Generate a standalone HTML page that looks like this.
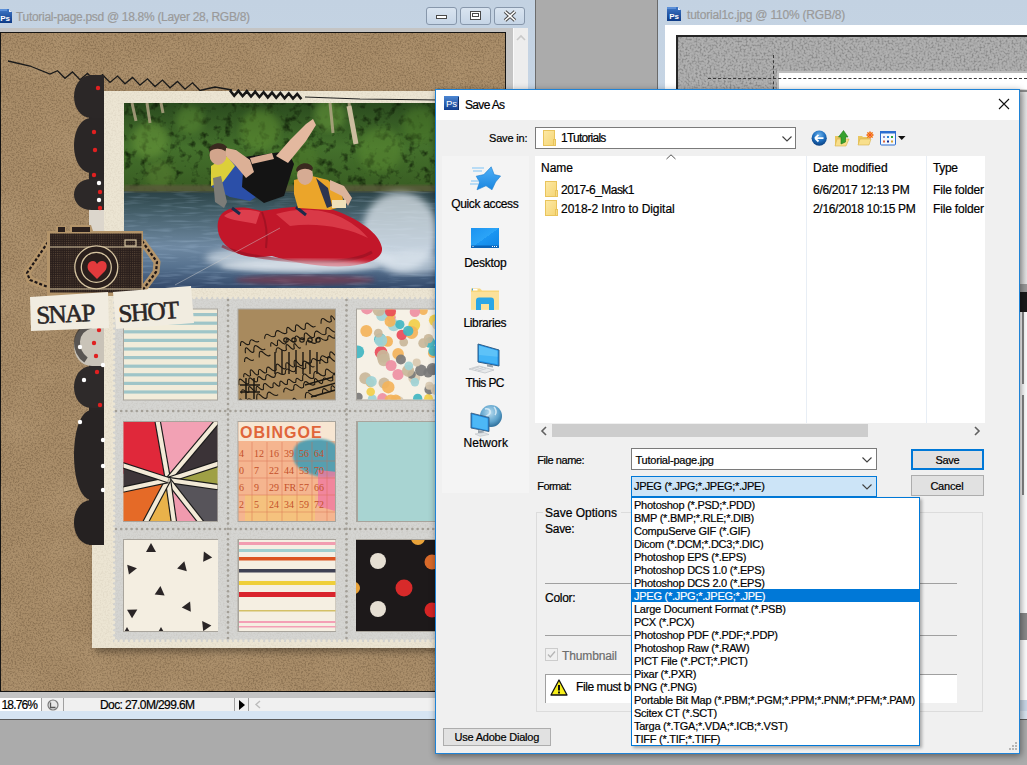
<!DOCTYPE html>
<html><head><meta charset="utf-8">
<style>
*{margin:0;padding:0;box-sizing:border-box}
html,body{width:1027px;height:765px;overflow:hidden;background:#ababab;font-family:"Liberation Sans",sans-serif;position:relative}
.a{position:absolute}
svg{position:absolute;overflow:visible}
.t{position:absolute;white-space:nowrap;font-family:"Liberation Sans",sans-serif;line-height:1;-webkit-text-stroke:0.2px currentColor}
.ttl{background:linear-gradient(#c3d2e2,#dae5f1)}
</style></head><body>

<div class="a ttl" style="left:0;top:0;width:535px;height:719px"></div>
<div class="a" style="left:0;top:28px;width:513px;height:670px;background:#c4c4c4"></div>
<div class="a" style="left:513px;top:28px;width:15px;height:670px;background:#ededed;border-left:1px solid #fafafa"></div>
<svg style="left:516px;top:34px" width="10" height="7"><path d="M1 6L5 2L9 6" fill="none" stroke="#c9c9c9" stroke-width="1.6"/></svg>
<div class="a" style="left:0;top:698px;width:528px;height:13px;background:#f0f0f0"></div>
<div class="a" style="left:0;top:698px;width:41px;height:13px;background:#fff"></div>
<div class="a" style="left:41px;top:698px;width:1px;height:13px;background:#a0a0a0"></div>
<svg style="left:46px;top:699px" width="14" height="12"><circle cx="7" cy="6" r="5" fill="#e6e6e6" stroke="#7a7a7a" stroke-width="1.2"/><path d="M4.5 3.5v5h5" fill="none" stroke="#555" stroke-width="1.3"/></svg>
<div class="a" style="left:63px;top:698px;width:1px;height:13px;background:#a0a0a0"></div>
<div class="a" style="left:234px;top:698px;width:1px;height:13px;background:#a0a0a0"></div>
<svg style="left:238px;top:700px" width="8" height="10"><path d="M1 0L7 5L1 10z" fill="#000"/></svg>
<div class="a" style="left:248px;top:698px;width:1px;height:13px;background:#a0a0a0"></div>
<svg style="left:254px;top:700px" width="8" height="9"><path d="M6 1L2 4.5L6 8" fill="none" stroke="#bcbcbc" stroke-width="1.4"/></svg>
<div class="a" style="left:0;top:711px;width:535px;height:8px;background:#d6e4f2"></div>
<div class="a" style="left:0;top:719px;width:535px;height:1px;background:#5a5a5a"></div>
<div class="a" style="left:535px;top:0;width:1px;height:720px;background:#6c6c6c"></div>

<svg style="left:-2px;top:7px" width="16" height="16" viewBox="0 0 16 16">
<defs><linearGradient id="psg-2" x1="0" y1="0" x2="0" y2="1"><stop offset="0" stop-color="#3f78c8"/><stop offset="1" stop-color="#0d3a86"/></linearGradient></defs>
<path d="M0 2h11l3 3v11H0z" fill="url(#psg-2)"/><path d="M11 2l3 3h-3z" fill="#e8eef8"/><rect x="0" y="2" width="9" height="2" fill="#5b8fd8"/>
<text x="2.2" y="13.5" font-family="Liberation Sans" font-size="8" fill="#fff" font-weight="bold">Ps</text></svg>
<div class="t" style="left:16.0px;top:10.84px;font-size:12px;color:#9a9a9a;letter-spacing:-0.298px;">Tutorial-page.psd @ 18.8% (Layer 28, RGB/8)</div>
<div class="t" style="left:1.5px;top:698.84px;font-size:12px;color:#000;letter-spacing:-0.841px;">18.76%</div>
<div class="t" style="left:100.0px;top:698.84px;font-size:12px;color:#000;letter-spacing:-0.607px;">Doc: 27.0M/299.6M</div>
<div class="a" style="left:426px;top:7px;width:31px;height:18px;border:1px solid #8797ab;border-radius:3px;background:linear-gradient(#d9e4f0,#c6d5e6)"></div><div class="a" style="left:436px;top:15px;width:11px;height:4px;border:1px solid #4a4a4a;background:#fff"></div>
<div class="a" style="left:460px;top:7px;width:31px;height:18px;border:1px solid #8797ab;border-radius:3px;background:linear-gradient(#d9e4f0,#c6d5e6)"></div><div class="a" style="left:470px;top:11px;width:11px;height:9px;border:1px solid #4a4a4a;background:#fff"></div><div class="a" style="left:472px;top:13px;width:7px;height:4px;border:1px solid #4a4a4a"></div>
<div class="a" style="left:494px;top:7px;width:31px;height:18px;border:1px solid #8797ab;border-radius:3px;background:linear-gradient(#d9e4f0,#c6d5e6)"></div><svg style="left:503px;top:10px" width="14" height="12"><path d="M2 1.5L12 10.5M12 1.5L2 10.5" stroke="#4a4a4a" stroke-width="3.6"/><path d="M2 1.5L12 10.5M12 1.5L2 10.5" stroke="#fff" stroke-width="1.6"/></svg>
<div id="lpcanvas" class="a" style="left:0;top:32px;width:506px;height:660px;background:#111;overflow:hidden">
<svg style="left:0;top:0" width="506" height="660" viewBox="0 32 506 660">
<defs>
<filter id="noise" x="0" y="0" width="100%" height="100%" color-interpolation-filters="sRGB"><feTurbulence type="fractalNoise" baseFrequency="0.6" numOctaves="3" seed="3"/><feColorMatrix type="matrix" values="0 0 0 0 0.3  0 0 0 0 0.22  0 0 0 0 0.14  0 0 0 -3 1.75"/></filter>
<filter id="mot" x="-20%" y="-20%" width="140%" height="140%" color-interpolation-filters="sRGB"><feTurbulence type="fractalNoise" baseFrequency="0.025" numOctaves="2" seed="5"/><feColorMatrix type="matrix" values="0 0 0 0 0.95  0 0 0 0 0.85  0 0 0 0 0.7  0 0 0 1.4 -0.55"/></filter>
<filter id="b1"><feGaussianBlur stdDeviation="1"/></filter>
<filter id="b2"><feGaussianBlur stdDeviation="2"/></filter>
<filter id="b3"><feGaussianBlur stdDeviation="3.5"/></filter>
<filter id="leaf" x="0" y="0" width="100%" height="100%" color-interpolation-filters="sRGB"><feTurbulence type="fractalNoise" baseFrequency="0.12" numOctaves="3" seed="11"/><feColorMatrix type="matrix" values="0 0 0 0 0.06  0 0 0 0 0.12  0 0 0 0 0.03  0 0 0 -3 1.45"/></filter>
<filter id="wat" x="0" y="0" width="100%" height="100%" color-interpolation-filters="sRGB"><feTurbulence type="fractalNoise" baseFrequency="0.04 0.35" numOctaves="2" seed="2"/><feColorMatrix type="matrix" values="0 0 0 0 0.75  0 0 0 0 0.85  0 0 0 0 0.95  0 0 0 2 -1.0"/></filter>
<linearGradient id="water" x1="0" y1="0" x2="0" y2="1"><stop offset="0" stop-color="#22373a"/><stop offset=".22" stop-color="#3f5962"/><stop offset=".6" stop-color="#6f89a2"/><stop offset=".8" stop-color="#56718e"/><stop offset="1" stop-color="#34496a"/></linearGradient>
<linearGradient id="tree" x1="0" y1="0" x2="0" y2="1"><stop offset="0" stop-color="#2a4a1e"/><stop offset=".5" stop-color="#44702c"/><stop offset="1" stop-color="#385c22"/></linearGradient>
<clipPath id="photo"><rect x="124" y="103" width="320" height="185"/></clipPath>
<pattern id="dots1" width="6" height="6" patternUnits="userSpaceOnUse"><circle cx="3" cy="3" r="1.4" fill="#b8b8b4"/></pattern>
</defs>
<rect x="1" y="33" width="504" height="658" fill="#a98d69"/>
<rect x="1" y="33" width="504" height="658" filter="url(#noise)" opacity=".3"/>
<rect x="1" y="33" width="504" height="658" filter="url(#mot)" opacity=".12"/>
<polyline points="8,61 30,66 50,74 57.5,70.7 65.0,78.3 72.5,72.0 80.0,79.7 87.5,73.4 95.0,81.0 102.5,74.7 110.0,82.4 117.5,76.1 125.0,83.8 132.5,77.4 140.0,85.1 147.5,78.8 155.0,86.5 162.5,80.1 170.0,87.8 177.5,81.5 185.0,89.2 192.5,82.8 200.0,90.5 215,87 232,90" fill="none" stroke="#1a1a1a" stroke-width="1.3"/>
<polyline points="230.0,90.5 234.2,95.7 238.4,90.9 242.6,96.1 246.8,91.3 251.0,96.5 255.2,91.8 259.4,97.0 263.6,92.2 267.8,97.4 272.0,92.6 276.2,97.8 280.4,93.0 284.6,98.2 288.8,93.4 293.0,98.6 297.2,93.9 301.4,99.1" fill="none" stroke="#161616" stroke-width="2.6"/>
<polyline points="305,97 360,99 440,100" fill="none" stroke="#222" stroke-width="1.2"/>
<rect x="95" y="95" width="360" height="557" fill="#000" opacity=".35" filter="url(#b3)"/>
<rect x="92" y="91" width="360" height="557" fill="#ece5d3"/>
<rect x="92" y="91" width="360" height="557" filter="url(#noise)" opacity=".05"/>
<polyline points="230.0,90.5 234.2,95.7 238.4,90.9 242.6,96.1 246.8,91.3 251.0,96.5 255.2,91.8 259.4,97.0 263.6,92.2 267.8,97.4 272.0,92.6 276.2,97.8 280.4,93.0 284.6,98.2 288.8,93.4 293.0,98.6 297.2,93.9 301.4,99.1" fill="none" stroke="#161616" stroke-width="2.6"/>
<polyline points="305,97 360,99 440,100" fill="none" stroke="#222" stroke-width="1.2"/>
<g clip-path="url(#photo)">
<rect x="124" y="185" width="320" height="103" fill="url(#water)"/>
<rect x="124" y="103" width="320" height="88" fill="url(#tree)"/>
<rect x="124" y="103" width="320" height="88" filter="url(#leaf)" opacity=".9"/>
<circle cx="150" cy="140" r="18" fill="#6a9a3a" opacity=".55" filter="url(#b3)"/>
<circle cx="190" cy="120" r="14" fill="#5c8c34" opacity=".55" filter="url(#b3)"/>
<circle cx="260" cy="130" r="20" fill="#5f8f33" opacity=".55" filter="url(#b3)"/>
<circle cx="330" cy="115" r="16" fill="#6b9c3e" opacity=".55" filter="url(#b3)"/>
<circle cx="380" cy="150" r="22" fill="#5a8a30" opacity=".55" filter="url(#b3)"/>
<circle cx="420" cy="125" r="18" fill="#4e7d2c" opacity=".55" filter="url(#b3)"/>
<circle cx="300" cy="160" r="18" fill="#4d7a2a" opacity=".55" filter="url(#b3)"/>
<circle cx="160" cy="175" r="14" fill="#587f30" opacity=".55" filter="url(#b3)"/>
<path d="M132 103l4 18M147 103l3 20M161 103l2 10M349 103l6 40M330 103l3 30" stroke="#b8a88a" stroke-width="3" opacity=".8"/>
<path d="M349 106l7 38" stroke="#cbbd9f" stroke-width="5"/>
<rect x="124" y="185" width="320" height="7" fill="#5a5a3a" opacity=".8" filter="url(#b1)"/>
<rect x="124" y="191" width="320" height="97" filter="url(#wat)" opacity=".3"/>
<ellipse cx="400" cy="232" rx="38" ry="40" fill="#e8eff5" opacity=".7" filter="url(#b3)"/>
<ellipse cx="300" cy="258" rx="95" ry="13" fill="#e3ebf2" opacity=".65" filter="url(#b3)"/>
<ellipse cx="415" cy="262" rx="30" ry="12" fill="#dfe8f0" opacity=".6" filter="url(#b3)"/>
<ellipse cx="305" cy="280" rx="70" ry="5" fill="#8a2a3a" opacity=".5" filter="url(#b2)"/>
<path d="M218 222c2-12 14-16 30-14l14 3 20-3c24-3 46-2 62 6c22 10 36 22 38 34c1 10-12 16-32 18c-30 2-58-4-78-10c-14 2-30 2-40-6c-10-6-16-16-14-28z" fill="#c2172a"/>
<path d="M224 216c8-7 22-8 36-4l-4 12c-12-3-24-3-32-8z" fill="#e8505c" opacity=".7"/>
<path d="M276 214c20-6 44-6 62 2c12 5 24 14 30 22c-20-10-50-16-78-12z" fill="#e8505c" opacity=".6"/>
<path d="M262 212c4 10 6 22 4 36" stroke="#8e0f1f" stroke-width="2" fill="none" opacity=".6"/>
<path d="M232 208l8 6M296 207l10 8" stroke="#1e2a4a" stroke-width="3"/>
<path d="M222 246c20 10 60 16 100 16c20 0 40-4 50-10" stroke="#8e1020" stroke-width="3" fill="none" opacity=".55"/>
<ellipse cx="300" cy="266" rx="80" ry="6" fill="#e9eef3" opacity=".6" filter="url(#b2)"/>
<path d="M175 285L280 228" stroke="#ccc" stroke-width=".8" opacity=".6"/>
<path d="M212 168l14-9 22 2 14 12 0 20-12 8-20-4-18-10z" fill="#2b4fa8"/>
<path d="M211 166l16-10 8 10-12 16-12 4z" fill="#dccf3a"/>
<path d="M213 178l2 24 9 6 3-6-6-26z" fill="#7c7c78"/>
<ellipse cx="218" cy="155" rx="8.5" ry="10" fill="#d2a58c"/>
<path d="M209 150c2-8 14-9 18-3l-2 4c-5-3-11-3-16 1z" fill="#3a2a1f"/>
<path d="M244 157l44-6 6 13-10 32-20 7-22-16z" fill="#141414"/>
<path d="M276 156l14-16 16-16 7-5 3 6-10 16-18 22z" fill="#e3b89f"/>
<path d="M226 148l10 2 14 10 4 12-8 6-10-12-10-10z" fill="#dcb096"/>
<path d="M250 158l22-5 2 6-22 5z" fill="#d9ad94"/>
<path d="M294 180l18-4 16 4 14 14 2 12-14 4-32-2-4-14z" fill="#eba52a"/>
<path d="M316 178l12 10 4 18-5 2-6-16z" fill="#2d3550"/>
<ellipse cx="305" cy="175" rx="8" ry="10" fill="#d6ab93"/>
<path d="M296 170c2-8 14-9 17-2l-1 3c-5-3-10-3-15 1z" fill="#3a2a1f"/>
<path d="M330 180l14 6 8 12-4 8-6-10-12-6z" fill="#dcb49c"/>
<path d="M332 200l14 0 0 8-14 0z" fill="#efe0b8"/>
</g>
<rect x="113" y="297" width="340" height="345" fill="#d5d5d2"/>
<rect x="113" y="297" width="340" height="345" filter="url(#noise)" opacity=".05"/>
<circle cx="116.0" cy="297.5" r="1.8" fill="#ece5d3"/><circle cx="121.2" cy="297.5" r="1.8" fill="#ece5d3"/><circle cx="126.4" cy="297.5" r="1.8" fill="#ece5d3"/><circle cx="131.6" cy="297.5" r="1.8" fill="#ece5d3"/><circle cx="136.8" cy="297.5" r="1.8" fill="#ece5d3"/><circle cx="142.0" cy="297.5" r="1.8" fill="#ece5d3"/><circle cx="147.2" cy="297.5" r="1.8" fill="#ece5d3"/><circle cx="152.4" cy="297.5" r="1.8" fill="#ece5d3"/><circle cx="157.6" cy="297.5" r="1.8" fill="#ece5d3"/><circle cx="162.8" cy="297.5" r="1.8" fill="#ece5d3"/><circle cx="168.0" cy="297.5" r="1.8" fill="#ece5d3"/><circle cx="173.2" cy="297.5" r="1.8" fill="#ece5d3"/><circle cx="178.4" cy="297.5" r="1.8" fill="#ece5d3"/><circle cx="183.6" cy="297.5" r="1.8" fill="#ece5d3"/><circle cx="188.8" cy="297.5" r="1.8" fill="#ece5d3"/><circle cx="194.0" cy="297.5" r="1.8" fill="#ece5d3"/><circle cx="199.2" cy="297.5" r="1.8" fill="#ece5d3"/><circle cx="204.4" cy="297.5" r="1.8" fill="#ece5d3"/><circle cx="209.6" cy="297.5" r="1.8" fill="#ece5d3"/><circle cx="214.8" cy="297.5" r="1.8" fill="#ece5d3"/><circle cx="220.0" cy="297.5" r="1.8" fill="#ece5d3"/><circle cx="225.2" cy="297.5" r="1.8" fill="#ece5d3"/><circle cx="230.4" cy="297.5" r="1.8" fill="#ece5d3"/><circle cx="235.6" cy="297.5" r="1.8" fill="#ece5d3"/><circle cx="240.8" cy="297.5" r="1.8" fill="#ece5d3"/><circle cx="246.0" cy="297.5" r="1.8" fill="#ece5d3"/><circle cx="251.2" cy="297.5" r="1.8" fill="#ece5d3"/><circle cx="256.4" cy="297.5" r="1.8" fill="#ece5d3"/><circle cx="261.6" cy="297.5" r="1.8" fill="#ece5d3"/><circle cx="266.8" cy="297.5" r="1.8" fill="#ece5d3"/><circle cx="272.0" cy="297.5" r="1.8" fill="#ece5d3"/><circle cx="277.2" cy="297.5" r="1.8" fill="#ece5d3"/><circle cx="282.4" cy="297.5" r="1.8" fill="#ece5d3"/><circle cx="287.6" cy="297.5" r="1.8" fill="#ece5d3"/><circle cx="292.8" cy="297.5" r="1.8" fill="#ece5d3"/><circle cx="298.0" cy="297.5" r="1.8" fill="#ece5d3"/><circle cx="303.2" cy="297.5" r="1.8" fill="#ece5d3"/><circle cx="308.4" cy="297.5" r="1.8" fill="#ece5d3"/><circle cx="313.6" cy="297.5" r="1.8" fill="#ece5d3"/><circle cx="318.8" cy="297.5" r="1.8" fill="#ece5d3"/><circle cx="324.0" cy="297.5" r="1.8" fill="#ece5d3"/><circle cx="329.2" cy="297.5" r="1.8" fill="#ece5d3"/><circle cx="334.4" cy="297.5" r="1.8" fill="#ece5d3"/><circle cx="339.6" cy="297.5" r="1.8" fill="#ece5d3"/><circle cx="344.8" cy="297.5" r="1.8" fill="#ece5d3"/><circle cx="350.0" cy="297.5" r="1.8" fill="#ece5d3"/><circle cx="355.2" cy="297.5" r="1.8" fill="#ece5d3"/><circle cx="360.4" cy="297.5" r="1.8" fill="#ece5d3"/><circle cx="365.6" cy="297.5" r="1.8" fill="#ece5d3"/><circle cx="370.8" cy="297.5" r="1.8" fill="#ece5d3"/><circle cx="376.0" cy="297.5" r="1.8" fill="#ece5d3"/><circle cx="381.2" cy="297.5" r="1.8" fill="#ece5d3"/><circle cx="386.4" cy="297.5" r="1.8" fill="#ece5d3"/><circle cx="391.6" cy="297.5" r="1.8" fill="#ece5d3"/><circle cx="396.8" cy="297.5" r="1.8" fill="#ece5d3"/><circle cx="402.0" cy="297.5" r="1.8" fill="#ece5d3"/><circle cx="407.2" cy="297.5" r="1.8" fill="#ece5d3"/><circle cx="412.4" cy="297.5" r="1.8" fill="#ece5d3"/><circle cx="417.6" cy="297.5" r="1.8" fill="#ece5d3"/><circle cx="422.8" cy="297.5" r="1.8" fill="#ece5d3"/><circle cx="428.0" cy="297.5" r="1.8" fill="#ece5d3"/><circle cx="433.2" cy="297.5" r="1.8" fill="#ece5d3"/><circle cx="438.4" cy="297.5" r="1.8" fill="#ece5d3"/><circle cx="443.6" cy="297.5" r="1.8" fill="#ece5d3"/><circle cx="448.8" cy="297.5" r="1.8" fill="#ece5d3"/><circle cx="116.0" cy="641" r="1.8" fill="#ece5d3"/><circle cx="121.2" cy="641" r="1.8" fill="#ece5d3"/><circle cx="126.4" cy="641" r="1.8" fill="#ece5d3"/><circle cx="131.6" cy="641" r="1.8" fill="#ece5d3"/><circle cx="136.8" cy="641" r="1.8" fill="#ece5d3"/><circle cx="142.0" cy="641" r="1.8" fill="#ece5d3"/><circle cx="147.2" cy="641" r="1.8" fill="#ece5d3"/><circle cx="152.4" cy="641" r="1.8" fill="#ece5d3"/><circle cx="157.6" cy="641" r="1.8" fill="#ece5d3"/><circle cx="162.8" cy="641" r="1.8" fill="#ece5d3"/><circle cx="168.0" cy="641" r="1.8" fill="#ece5d3"/><circle cx="173.2" cy="641" r="1.8" fill="#ece5d3"/><circle cx="178.4" cy="641" r="1.8" fill="#ece5d3"/><circle cx="183.6" cy="641" r="1.8" fill="#ece5d3"/><circle cx="188.8" cy="641" r="1.8" fill="#ece5d3"/><circle cx="194.0" cy="641" r="1.8" fill="#ece5d3"/><circle cx="199.2" cy="641" r="1.8" fill="#ece5d3"/><circle cx="204.4" cy="641" r="1.8" fill="#ece5d3"/><circle cx="209.6" cy="641" r="1.8" fill="#ece5d3"/><circle cx="214.8" cy="641" r="1.8" fill="#ece5d3"/><circle cx="220.0" cy="641" r="1.8" fill="#ece5d3"/><circle cx="225.2" cy="641" r="1.8" fill="#ece5d3"/><circle cx="230.4" cy="641" r="1.8" fill="#ece5d3"/><circle cx="235.6" cy="641" r="1.8" fill="#ece5d3"/><circle cx="240.8" cy="641" r="1.8" fill="#ece5d3"/><circle cx="246.0" cy="641" r="1.8" fill="#ece5d3"/><circle cx="251.2" cy="641" r="1.8" fill="#ece5d3"/><circle cx="256.4" cy="641" r="1.8" fill="#ece5d3"/><circle cx="261.6" cy="641" r="1.8" fill="#ece5d3"/><circle cx="266.8" cy="641" r="1.8" fill="#ece5d3"/><circle cx="272.0" cy="641" r="1.8" fill="#ece5d3"/><circle cx="277.2" cy="641" r="1.8" fill="#ece5d3"/><circle cx="282.4" cy="641" r="1.8" fill="#ece5d3"/><circle cx="287.6" cy="641" r="1.8" fill="#ece5d3"/><circle cx="292.8" cy="641" r="1.8" fill="#ece5d3"/><circle cx="298.0" cy="641" r="1.8" fill="#ece5d3"/><circle cx="303.2" cy="641" r="1.8" fill="#ece5d3"/><circle cx="308.4" cy="641" r="1.8" fill="#ece5d3"/><circle cx="313.6" cy="641" r="1.8" fill="#ece5d3"/><circle cx="318.8" cy="641" r="1.8" fill="#ece5d3"/><circle cx="324.0" cy="641" r="1.8" fill="#ece5d3"/><circle cx="329.2" cy="641" r="1.8" fill="#ece5d3"/><circle cx="334.4" cy="641" r="1.8" fill="#ece5d3"/><circle cx="339.6" cy="641" r="1.8" fill="#ece5d3"/><circle cx="344.8" cy="641" r="1.8" fill="#ece5d3"/><circle cx="350.0" cy="641" r="1.8" fill="#ece5d3"/><circle cx="355.2" cy="641" r="1.8" fill="#ece5d3"/><circle cx="360.4" cy="641" r="1.8" fill="#ece5d3"/><circle cx="365.6" cy="641" r="1.8" fill="#ece5d3"/><circle cx="370.8" cy="641" r="1.8" fill="#ece5d3"/><circle cx="376.0" cy="641" r="1.8" fill="#ece5d3"/><circle cx="381.2" cy="641" r="1.8" fill="#ece5d3"/><circle cx="386.4" cy="641" r="1.8" fill="#ece5d3"/><circle cx="391.6" cy="641" r="1.8" fill="#ece5d3"/><circle cx="396.8" cy="641" r="1.8" fill="#ece5d3"/><circle cx="402.0" cy="641" r="1.8" fill="#ece5d3"/><circle cx="407.2" cy="641" r="1.8" fill="#ece5d3"/><circle cx="412.4" cy="641" r="1.8" fill="#ece5d3"/><circle cx="417.6" cy="641" r="1.8" fill="#ece5d3"/><circle cx="422.8" cy="641" r="1.8" fill="#ece5d3"/><circle cx="428.0" cy="641" r="1.8" fill="#ece5d3"/><circle cx="433.2" cy="641" r="1.8" fill="#ece5d3"/><circle cx="438.4" cy="641" r="1.8" fill="#ece5d3"/><circle cx="443.6" cy="641" r="1.8" fill="#ece5d3"/><circle cx="448.8" cy="641" r="1.8" fill="#ece5d3"/><circle cx="113.5" cy="300.0" r="1.8" fill="#ece5d3"/><circle cx="113.5" cy="305.2" r="1.8" fill="#ece5d3"/><circle cx="113.5" cy="310.4" r="1.8" fill="#ece5d3"/><circle cx="113.5" cy="315.6" r="1.8" fill="#ece5d3"/><circle cx="113.5" cy="320.8" r="1.8" fill="#ece5d3"/><circle cx="113.5" cy="326.0" r="1.8" fill="#ece5d3"/><circle cx="113.5" cy="331.2" r="1.8" fill="#ece5d3"/><circle cx="113.5" cy="336.4" r="1.8" fill="#ece5d3"/><circle cx="113.5" cy="341.6" r="1.8" fill="#ece5d3"/><circle cx="113.5" cy="346.8" r="1.8" fill="#ece5d3"/><circle cx="113.5" cy="352.0" r="1.8" fill="#ece5d3"/><circle cx="113.5" cy="357.2" r="1.8" fill="#ece5d3"/><circle cx="113.5" cy="362.4" r="1.8" fill="#ece5d3"/><circle cx="113.5" cy="367.6" r="1.8" fill="#ece5d3"/><circle cx="113.5" cy="372.8" r="1.8" fill="#ece5d3"/><circle cx="113.5" cy="378.0" r="1.8" fill="#ece5d3"/><circle cx="113.5" cy="383.2" r="1.8" fill="#ece5d3"/><circle cx="113.5" cy="388.4" r="1.8" fill="#ece5d3"/><circle cx="113.5" cy="393.6" r="1.8" fill="#ece5d3"/><circle cx="113.5" cy="398.8" r="1.8" fill="#ece5d3"/><circle cx="113.5" cy="404.0" r="1.8" fill="#ece5d3"/><circle cx="113.5" cy="409.2" r="1.8" fill="#ece5d3"/><circle cx="113.5" cy="414.4" r="1.8" fill="#ece5d3"/><circle cx="113.5" cy="419.6" r="1.8" fill="#ece5d3"/><circle cx="113.5" cy="424.8" r="1.8" fill="#ece5d3"/><circle cx="113.5" cy="430.0" r="1.8" fill="#ece5d3"/><circle cx="113.5" cy="435.2" r="1.8" fill="#ece5d3"/><circle cx="113.5" cy="440.4" r="1.8" fill="#ece5d3"/><circle cx="113.5" cy="445.6" r="1.8" fill="#ece5d3"/><circle cx="113.5" cy="450.8" r="1.8" fill="#ece5d3"/><circle cx="113.5" cy="456.0" r="1.8" fill="#ece5d3"/><circle cx="113.5" cy="461.2" r="1.8" fill="#ece5d3"/><circle cx="113.5" cy="466.4" r="1.8" fill="#ece5d3"/><circle cx="113.5" cy="471.6" r="1.8" fill="#ece5d3"/><circle cx="113.5" cy="476.8" r="1.8" fill="#ece5d3"/><circle cx="113.5" cy="482.0" r="1.8" fill="#ece5d3"/><circle cx="113.5" cy="487.2" r="1.8" fill="#ece5d3"/><circle cx="113.5" cy="492.4" r="1.8" fill="#ece5d3"/><circle cx="113.5" cy="497.6" r="1.8" fill="#ece5d3"/><circle cx="113.5" cy="502.8" r="1.8" fill="#ece5d3"/><circle cx="113.5" cy="508.0" r="1.8" fill="#ece5d3"/><circle cx="113.5" cy="513.2" r="1.8" fill="#ece5d3"/><circle cx="113.5" cy="518.4" r="1.8" fill="#ece5d3"/><circle cx="113.5" cy="523.6" r="1.8" fill="#ece5d3"/><circle cx="113.5" cy="528.8" r="1.8" fill="#ece5d3"/><circle cx="113.5" cy="534.0" r="1.8" fill="#ece5d3"/><circle cx="113.5" cy="539.2" r="1.8" fill="#ece5d3"/><circle cx="113.5" cy="544.4" r="1.8" fill="#ece5d3"/><circle cx="113.5" cy="549.6" r="1.8" fill="#ece5d3"/><circle cx="113.5" cy="554.8" r="1.8" fill="#ece5d3"/><circle cx="113.5" cy="560.0" r="1.8" fill="#ece5d3"/><circle cx="113.5" cy="565.2" r="1.8" fill="#ece5d3"/><circle cx="113.5" cy="570.4" r="1.8" fill="#ece5d3"/><circle cx="113.5" cy="575.6" r="1.8" fill="#ece5d3"/><circle cx="113.5" cy="580.8" r="1.8" fill="#ece5d3"/><circle cx="113.5" cy="586.0" r="1.8" fill="#ece5d3"/><circle cx="113.5" cy="591.2" r="1.8" fill="#ece5d3"/><circle cx="113.5" cy="596.4" r="1.8" fill="#ece5d3"/><circle cx="113.5" cy="601.6" r="1.8" fill="#ece5d3"/><circle cx="113.5" cy="606.8" r="1.8" fill="#ece5d3"/><circle cx="113.5" cy="612.0" r="1.8" fill="#ece5d3"/><circle cx="113.5" cy="617.2" r="1.8" fill="#ece5d3"/><circle cx="113.5" cy="622.4" r="1.8" fill="#ece5d3"/><circle cx="113.5" cy="627.6" r="1.8" fill="#ece5d3"/><circle cx="113.5" cy="632.8" r="1.8" fill="#ece5d3"/><circle cx="113.5" cy="638.0" r="1.8" fill="#ece5d3"/><circle cx="116.0" cy="411" r="1.3" fill="#a39f97"/><circle cx="121.2" cy="411" r="1.3" fill="#a39f97"/><circle cx="126.4" cy="411" r="1.3" fill="#a39f97"/><circle cx="131.6" cy="411" r="1.3" fill="#a39f97"/><circle cx="136.8" cy="411" r="1.3" fill="#a39f97"/><circle cx="142.0" cy="411" r="1.3" fill="#a39f97"/><circle cx="147.2" cy="411" r="1.3" fill="#a39f97"/><circle cx="152.4" cy="411" r="1.3" fill="#a39f97"/><circle cx="157.6" cy="411" r="1.3" fill="#a39f97"/><circle cx="162.8" cy="411" r="1.3" fill="#a39f97"/><circle cx="168.0" cy="411" r="1.3" fill="#a39f97"/><circle cx="173.2" cy="411" r="1.3" fill="#a39f97"/><circle cx="178.4" cy="411" r="1.3" fill="#a39f97"/><circle cx="183.6" cy="411" r="1.3" fill="#a39f97"/><circle cx="188.8" cy="411" r="1.3" fill="#a39f97"/><circle cx="194.0" cy="411" r="1.3" fill="#a39f97"/><circle cx="199.2" cy="411" r="1.3" fill="#a39f97"/><circle cx="204.4" cy="411" r="1.3" fill="#a39f97"/><circle cx="209.6" cy="411" r="1.3" fill="#a39f97"/><circle cx="214.8" cy="411" r="1.3" fill="#a39f97"/><circle cx="220.0" cy="411" r="1.3" fill="#a39f97"/><circle cx="225.2" cy="411" r="1.3" fill="#a39f97"/><circle cx="230.4" cy="411" r="1.3" fill="#a39f97"/><circle cx="235.6" cy="411" r="1.3" fill="#a39f97"/><circle cx="240.8" cy="411" r="1.3" fill="#a39f97"/><circle cx="246.0" cy="411" r="1.3" fill="#a39f97"/><circle cx="251.2" cy="411" r="1.3" fill="#a39f97"/><circle cx="256.4" cy="411" r="1.3" fill="#a39f97"/><circle cx="261.6" cy="411" r="1.3" fill="#a39f97"/><circle cx="266.8" cy="411" r="1.3" fill="#a39f97"/><circle cx="272.0" cy="411" r="1.3" fill="#a39f97"/><circle cx="277.2" cy="411" r="1.3" fill="#a39f97"/><circle cx="282.4" cy="411" r="1.3" fill="#a39f97"/><circle cx="287.6" cy="411" r="1.3" fill="#a39f97"/><circle cx="292.8" cy="411" r="1.3" fill="#a39f97"/><circle cx="298.0" cy="411" r="1.3" fill="#a39f97"/><circle cx="303.2" cy="411" r="1.3" fill="#a39f97"/><circle cx="308.4" cy="411" r="1.3" fill="#a39f97"/><circle cx="313.6" cy="411" r="1.3" fill="#a39f97"/><circle cx="318.8" cy="411" r="1.3" fill="#a39f97"/><circle cx="324.0" cy="411" r="1.3" fill="#a39f97"/><circle cx="329.2" cy="411" r="1.3" fill="#a39f97"/><circle cx="334.4" cy="411" r="1.3" fill="#a39f97"/><circle cx="339.6" cy="411" r="1.3" fill="#a39f97"/><circle cx="344.8" cy="411" r="1.3" fill="#a39f97"/><circle cx="350.0" cy="411" r="1.3" fill="#a39f97"/><circle cx="355.2" cy="411" r="1.3" fill="#a39f97"/><circle cx="360.4" cy="411" r="1.3" fill="#a39f97"/><circle cx="365.6" cy="411" r="1.3" fill="#a39f97"/><circle cx="370.8" cy="411" r="1.3" fill="#a39f97"/><circle cx="376.0" cy="411" r="1.3" fill="#a39f97"/><circle cx="381.2" cy="411" r="1.3" fill="#a39f97"/><circle cx="386.4" cy="411" r="1.3" fill="#a39f97"/><circle cx="391.6" cy="411" r="1.3" fill="#a39f97"/><circle cx="396.8" cy="411" r="1.3" fill="#a39f97"/><circle cx="402.0" cy="411" r="1.3" fill="#a39f97"/><circle cx="407.2" cy="411" r="1.3" fill="#a39f97"/><circle cx="412.4" cy="411" r="1.3" fill="#a39f97"/><circle cx="417.6" cy="411" r="1.3" fill="#a39f97"/><circle cx="422.8" cy="411" r="1.3" fill="#a39f97"/><circle cx="428.0" cy="411" r="1.3" fill="#a39f97"/><circle cx="433.2" cy="411" r="1.3" fill="#a39f97"/><circle cx="438.4" cy="411" r="1.3" fill="#a39f97"/><circle cx="443.6" cy="411" r="1.3" fill="#a39f97"/><circle cx="448.8" cy="411" r="1.3" fill="#a39f97"/><circle cx="116.0" cy="529" r="1.3" fill="#a39f97"/><circle cx="121.2" cy="529" r="1.3" fill="#a39f97"/><circle cx="126.4" cy="529" r="1.3" fill="#a39f97"/><circle cx="131.6" cy="529" r="1.3" fill="#a39f97"/><circle cx="136.8" cy="529" r="1.3" fill="#a39f97"/><circle cx="142.0" cy="529" r="1.3" fill="#a39f97"/><circle cx="147.2" cy="529" r="1.3" fill="#a39f97"/><circle cx="152.4" cy="529" r="1.3" fill="#a39f97"/><circle cx="157.6" cy="529" r="1.3" fill="#a39f97"/><circle cx="162.8" cy="529" r="1.3" fill="#a39f97"/><circle cx="168.0" cy="529" r="1.3" fill="#a39f97"/><circle cx="173.2" cy="529" r="1.3" fill="#a39f97"/><circle cx="178.4" cy="529" r="1.3" fill="#a39f97"/><circle cx="183.6" cy="529" r="1.3" fill="#a39f97"/><circle cx="188.8" cy="529" r="1.3" fill="#a39f97"/><circle cx="194.0" cy="529" r="1.3" fill="#a39f97"/><circle cx="199.2" cy="529" r="1.3" fill="#a39f97"/><circle cx="204.4" cy="529" r="1.3" fill="#a39f97"/><circle cx="209.6" cy="529" r="1.3" fill="#a39f97"/><circle cx="214.8" cy="529" r="1.3" fill="#a39f97"/><circle cx="220.0" cy="529" r="1.3" fill="#a39f97"/><circle cx="225.2" cy="529" r="1.3" fill="#a39f97"/><circle cx="230.4" cy="529" r="1.3" fill="#a39f97"/><circle cx="235.6" cy="529" r="1.3" fill="#a39f97"/><circle cx="240.8" cy="529" r="1.3" fill="#a39f97"/><circle cx="246.0" cy="529" r="1.3" fill="#a39f97"/><circle cx="251.2" cy="529" r="1.3" fill="#a39f97"/><circle cx="256.4" cy="529" r="1.3" fill="#a39f97"/><circle cx="261.6" cy="529" r="1.3" fill="#a39f97"/><circle cx="266.8" cy="529" r="1.3" fill="#a39f97"/><circle cx="272.0" cy="529" r="1.3" fill="#a39f97"/><circle cx="277.2" cy="529" r="1.3" fill="#a39f97"/><circle cx="282.4" cy="529" r="1.3" fill="#a39f97"/><circle cx="287.6" cy="529" r="1.3" fill="#a39f97"/><circle cx="292.8" cy="529" r="1.3" fill="#a39f97"/><circle cx="298.0" cy="529" r="1.3" fill="#a39f97"/><circle cx="303.2" cy="529" r="1.3" fill="#a39f97"/><circle cx="308.4" cy="529" r="1.3" fill="#a39f97"/><circle cx="313.6" cy="529" r="1.3" fill="#a39f97"/><circle cx="318.8" cy="529" r="1.3" fill="#a39f97"/><circle cx="324.0" cy="529" r="1.3" fill="#a39f97"/><circle cx="329.2" cy="529" r="1.3" fill="#a39f97"/><circle cx="334.4" cy="529" r="1.3" fill="#a39f97"/><circle cx="339.6" cy="529" r="1.3" fill="#a39f97"/><circle cx="344.8" cy="529" r="1.3" fill="#a39f97"/><circle cx="350.0" cy="529" r="1.3" fill="#a39f97"/><circle cx="355.2" cy="529" r="1.3" fill="#a39f97"/><circle cx="360.4" cy="529" r="1.3" fill="#a39f97"/><circle cx="365.6" cy="529" r="1.3" fill="#a39f97"/><circle cx="370.8" cy="529" r="1.3" fill="#a39f97"/><circle cx="376.0" cy="529" r="1.3" fill="#a39f97"/><circle cx="381.2" cy="529" r="1.3" fill="#a39f97"/><circle cx="386.4" cy="529" r="1.3" fill="#a39f97"/><circle cx="391.6" cy="529" r="1.3" fill="#a39f97"/><circle cx="396.8" cy="529" r="1.3" fill="#a39f97"/><circle cx="402.0" cy="529" r="1.3" fill="#a39f97"/><circle cx="407.2" cy="529" r="1.3" fill="#a39f97"/><circle cx="412.4" cy="529" r="1.3" fill="#a39f97"/><circle cx="417.6" cy="529" r="1.3" fill="#a39f97"/><circle cx="422.8" cy="529" r="1.3" fill="#a39f97"/><circle cx="428.0" cy="529" r="1.3" fill="#a39f97"/><circle cx="433.2" cy="529" r="1.3" fill="#a39f97"/><circle cx="438.4" cy="529" r="1.3" fill="#a39f97"/><circle cx="443.6" cy="529" r="1.3" fill="#a39f97"/><circle cx="448.8" cy="529" r="1.3" fill="#a39f97"/><circle cx="228" cy="300.0" r="1.3" fill="#a39f97"/><circle cx="228" cy="305.2" r="1.3" fill="#a39f97"/><circle cx="228" cy="310.4" r="1.3" fill="#a39f97"/><circle cx="228" cy="315.6" r="1.3" fill="#a39f97"/><circle cx="228" cy="320.8" r="1.3" fill="#a39f97"/><circle cx="228" cy="326.0" r="1.3" fill="#a39f97"/><circle cx="228" cy="331.2" r="1.3" fill="#a39f97"/><circle cx="228" cy="336.4" r="1.3" fill="#a39f97"/><circle cx="228" cy="341.6" r="1.3" fill="#a39f97"/><circle cx="228" cy="346.8" r="1.3" fill="#a39f97"/><circle cx="228" cy="352.0" r="1.3" fill="#a39f97"/><circle cx="228" cy="357.2" r="1.3" fill="#a39f97"/><circle cx="228" cy="362.4" r="1.3" fill="#a39f97"/><circle cx="228" cy="367.6" r="1.3" fill="#a39f97"/><circle cx="228" cy="372.8" r="1.3" fill="#a39f97"/><circle cx="228" cy="378.0" r="1.3" fill="#a39f97"/><circle cx="228" cy="383.2" r="1.3" fill="#a39f97"/><circle cx="228" cy="388.4" r="1.3" fill="#a39f97"/><circle cx="228" cy="393.6" r="1.3" fill="#a39f97"/><circle cx="228" cy="398.8" r="1.3" fill="#a39f97"/><circle cx="228" cy="404.0" r="1.3" fill="#a39f97"/><circle cx="228" cy="409.2" r="1.3" fill="#a39f97"/><circle cx="228" cy="414.4" r="1.3" fill="#a39f97"/><circle cx="228" cy="419.6" r="1.3" fill="#a39f97"/><circle cx="228" cy="424.8" r="1.3" fill="#a39f97"/><circle cx="228" cy="430.0" r="1.3" fill="#a39f97"/><circle cx="228" cy="435.2" r="1.3" fill="#a39f97"/><circle cx="228" cy="440.4" r="1.3" fill="#a39f97"/><circle cx="228" cy="445.6" r="1.3" fill="#a39f97"/><circle cx="228" cy="450.8" r="1.3" fill="#a39f97"/><circle cx="228" cy="456.0" r="1.3" fill="#a39f97"/><circle cx="228" cy="461.2" r="1.3" fill="#a39f97"/><circle cx="228" cy="466.4" r="1.3" fill="#a39f97"/><circle cx="228" cy="471.6" r="1.3" fill="#a39f97"/><circle cx="228" cy="476.8" r="1.3" fill="#a39f97"/><circle cx="228" cy="482.0" r="1.3" fill="#a39f97"/><circle cx="228" cy="487.2" r="1.3" fill="#a39f97"/><circle cx="228" cy="492.4" r="1.3" fill="#a39f97"/><circle cx="228" cy="497.6" r="1.3" fill="#a39f97"/><circle cx="228" cy="502.8" r="1.3" fill="#a39f97"/><circle cx="228" cy="508.0" r="1.3" fill="#a39f97"/><circle cx="228" cy="513.2" r="1.3" fill="#a39f97"/><circle cx="228" cy="518.4" r="1.3" fill="#a39f97"/><circle cx="228" cy="523.6" r="1.3" fill="#a39f97"/><circle cx="228" cy="528.8" r="1.3" fill="#a39f97"/><circle cx="228" cy="534.0" r="1.3" fill="#a39f97"/><circle cx="228" cy="539.2" r="1.3" fill="#a39f97"/><circle cx="228" cy="544.4" r="1.3" fill="#a39f97"/><circle cx="228" cy="549.6" r="1.3" fill="#a39f97"/><circle cx="228" cy="554.8" r="1.3" fill="#a39f97"/><circle cx="228" cy="560.0" r="1.3" fill="#a39f97"/><circle cx="228" cy="565.2" r="1.3" fill="#a39f97"/><circle cx="228" cy="570.4" r="1.3" fill="#a39f97"/><circle cx="228" cy="575.6" r="1.3" fill="#a39f97"/><circle cx="228" cy="580.8" r="1.3" fill="#a39f97"/><circle cx="228" cy="586.0" r="1.3" fill="#a39f97"/><circle cx="228" cy="591.2" r="1.3" fill="#a39f97"/><circle cx="228" cy="596.4" r="1.3" fill="#a39f97"/><circle cx="228" cy="601.6" r="1.3" fill="#a39f97"/><circle cx="228" cy="606.8" r="1.3" fill="#a39f97"/><circle cx="228" cy="612.0" r="1.3" fill="#a39f97"/><circle cx="228" cy="617.2" r="1.3" fill="#a39f97"/><circle cx="228" cy="622.4" r="1.3" fill="#a39f97"/><circle cx="228" cy="627.6" r="1.3" fill="#a39f97"/><circle cx="228" cy="632.8" r="1.3" fill="#a39f97"/><circle cx="228" cy="638.0" r="1.3" fill="#a39f97"/><circle cx="346.5" cy="300.0" r="1.3" fill="#a39f97"/><circle cx="346.5" cy="305.2" r="1.3" fill="#a39f97"/><circle cx="346.5" cy="310.4" r="1.3" fill="#a39f97"/><circle cx="346.5" cy="315.6" r="1.3" fill="#a39f97"/><circle cx="346.5" cy="320.8" r="1.3" fill="#a39f97"/><circle cx="346.5" cy="326.0" r="1.3" fill="#a39f97"/><circle cx="346.5" cy="331.2" r="1.3" fill="#a39f97"/><circle cx="346.5" cy="336.4" r="1.3" fill="#a39f97"/><circle cx="346.5" cy="341.6" r="1.3" fill="#a39f97"/><circle cx="346.5" cy="346.8" r="1.3" fill="#a39f97"/><circle cx="346.5" cy="352.0" r="1.3" fill="#a39f97"/><circle cx="346.5" cy="357.2" r="1.3" fill="#a39f97"/><circle cx="346.5" cy="362.4" r="1.3" fill="#a39f97"/><circle cx="346.5" cy="367.6" r="1.3" fill="#a39f97"/><circle cx="346.5" cy="372.8" r="1.3" fill="#a39f97"/><circle cx="346.5" cy="378.0" r="1.3" fill="#a39f97"/><circle cx="346.5" cy="383.2" r="1.3" fill="#a39f97"/><circle cx="346.5" cy="388.4" r="1.3" fill="#a39f97"/><circle cx="346.5" cy="393.6" r="1.3" fill="#a39f97"/><circle cx="346.5" cy="398.8" r="1.3" fill="#a39f97"/><circle cx="346.5" cy="404.0" r="1.3" fill="#a39f97"/><circle cx="346.5" cy="409.2" r="1.3" fill="#a39f97"/><circle cx="346.5" cy="414.4" r="1.3" fill="#a39f97"/><circle cx="346.5" cy="419.6" r="1.3" fill="#a39f97"/><circle cx="346.5" cy="424.8" r="1.3" fill="#a39f97"/><circle cx="346.5" cy="430.0" r="1.3" fill="#a39f97"/><circle cx="346.5" cy="435.2" r="1.3" fill="#a39f97"/><circle cx="346.5" cy="440.4" r="1.3" fill="#a39f97"/><circle cx="346.5" cy="445.6" r="1.3" fill="#a39f97"/><circle cx="346.5" cy="450.8" r="1.3" fill="#a39f97"/><circle cx="346.5" cy="456.0" r="1.3" fill="#a39f97"/><circle cx="346.5" cy="461.2" r="1.3" fill="#a39f97"/><circle cx="346.5" cy="466.4" r="1.3" fill="#a39f97"/><circle cx="346.5" cy="471.6" r="1.3" fill="#a39f97"/><circle cx="346.5" cy="476.8" r="1.3" fill="#a39f97"/><circle cx="346.5" cy="482.0" r="1.3" fill="#a39f97"/><circle cx="346.5" cy="487.2" r="1.3" fill="#a39f97"/><circle cx="346.5" cy="492.4" r="1.3" fill="#a39f97"/><circle cx="346.5" cy="497.6" r="1.3" fill="#a39f97"/><circle cx="346.5" cy="502.8" r="1.3" fill="#a39f97"/><circle cx="346.5" cy="508.0" r="1.3" fill="#a39f97"/><circle cx="346.5" cy="513.2" r="1.3" fill="#a39f97"/><circle cx="346.5" cy="518.4" r="1.3" fill="#a39f97"/><circle cx="346.5" cy="523.6" r="1.3" fill="#a39f97"/><circle cx="346.5" cy="528.8" r="1.3" fill="#a39f97"/><circle cx="346.5" cy="534.0" r="1.3" fill="#a39f97"/><circle cx="346.5" cy="539.2" r="1.3" fill="#a39f97"/><circle cx="346.5" cy="544.4" r="1.3" fill="#a39f97"/><circle cx="346.5" cy="549.6" r="1.3" fill="#a39f97"/><circle cx="346.5" cy="554.8" r="1.3" fill="#a39f97"/><circle cx="346.5" cy="560.0" r="1.3" fill="#a39f97"/><circle cx="346.5" cy="565.2" r="1.3" fill="#a39f97"/><circle cx="346.5" cy="570.4" r="1.3" fill="#a39f97"/><circle cx="346.5" cy="575.6" r="1.3" fill="#a39f97"/><circle cx="346.5" cy="580.8" r="1.3" fill="#a39f97"/><circle cx="346.5" cy="586.0" r="1.3" fill="#a39f97"/><circle cx="346.5" cy="591.2" r="1.3" fill="#a39f97"/><circle cx="346.5" cy="596.4" r="1.3" fill="#a39f97"/><circle cx="346.5" cy="601.6" r="1.3" fill="#a39f97"/><circle cx="346.5" cy="606.8" r="1.3" fill="#a39f97"/><circle cx="346.5" cy="612.0" r="1.3" fill="#a39f97"/><circle cx="346.5" cy="617.2" r="1.3" fill="#a39f97"/><circle cx="346.5" cy="622.4" r="1.3" fill="#a39f97"/><circle cx="346.5" cy="627.6" r="1.3" fill="#a39f97"/><circle cx="346.5" cy="632.8" r="1.3" fill="#a39f97"/><circle cx="346.5" cy="638.0" r="1.3" fill="#a39f97"/>
<rect x="123" y="308.5" width="95" height="92.0" fill="#a8a49c"/>
<rect x="123" y="421" width="95" height="101" fill="#a8a49c"/>
<rect x="123" y="539" width="95" height="93" fill="#a8a49c"/>
<rect x="237.5" y="308.5" width="98.5" height="92.0" fill="#a8a49c"/>
<rect x="237.5" y="421" width="98.5" height="101" fill="#a8a49c"/>
<rect x="237.5" y="539" width="98.5" height="93" fill="#a8a49c"/>
<rect x="356" y="308.5" width="105" height="92.0" fill="#a8a49c"/>
<rect x="356" y="421" width="105" height="101" fill="#a8a49c"/>
<rect x="356" y="539" width="105" height="93" fill="#a8a49c"/>
<rect x="124" y="309.5" width="93" height="90" fill="#f2ecda"/>
<rect x="124" y="313.0" width="93" height="3.2" fill="#9fc5c8"/>
<rect x="124" y="321.6" width="93" height="3.2" fill="#9fc5c8"/>
<rect x="124" y="330.2" width="93" height="3.2" fill="#9fc5c8"/>
<rect x="124" y="338.8" width="93" height="3.2" fill="#9fc5c8"/>
<rect x="124" y="347.4" width="93" height="3.2" fill="#9fc5c8"/>
<rect x="124" y="356.0" width="93" height="3.2" fill="#9fc5c8"/>
<rect x="124" y="364.6" width="93" height="3.2" fill="#9fc5c8"/>
<rect x="124" y="373.2" width="93" height="3.2" fill="#9fc5c8"/>
<rect x="124" y="381.8" width="93" height="3.2" fill="#9fc5c8"/>
<rect x="124" y="390.4" width="93" height="3.2" fill="#9fc5c8"/>
<rect x="238.5" y="309.5" width="96.5" height="90" fill="#a88a5e"/>
<clipPath id="c12"><rect x="238.5" y="309.5" width="96.5" height="90.0"/></clipPath>
<g clip-path="url(#c12)" stroke="#1c1812" stroke-width="1.1" fill="none"><path d="M233.9 324.0 q2.3 -6.5 4.6 -1.9 t4.6 3.2 q2.4 -5.3 4.9 -1.6 t4.9 2.6 m6 0 q2.8 -6.0 5.5 -1.8 t5.5 3.0 q3.0 -6.9 6.0 -2.1 t6.0 3.4 q2.2 -7.6 4.4 -2.3 t4.4 3.8 q2.5 -8.5 4.9 -2.5 t4.9 4.2 q2.6 -7.7 5.2 -2.3 t5.2 3.8 m6 0 q2.6 -7.4 5.3 -2.2 t5.3 3.7 q1.5 -8.5 3.1 -2.5 t3.1 4.2 q2.6 -8.5 5.2 -2.6 t5.2 4.3" transform="rotate(-22 294 318)"/><path d="M239.4 334.0 q2.1 -8.2 4.2 -2.5 t4.2 4.1 q2.9 -8.5 5.8 -2.6 t5.8 4.3 m6 0 q1.7 -5.9 3.4 -1.8 t3.4 2.9 q2.2 -7.5 4.3 -2.3 t4.3 3.8 q2.3 -6.5 4.5 -2.0 t4.5 3.3 q2.4 -7.3 4.8 -2.2 t4.8 3.7 q2.5 -8.7 5.0 -2.6 t5.0 4.4 q3.0 -7.7 6.0 -2.3 t6.0 3.8 q2.8 -8.9 5.6 -2.7 t5.6 4.4 q2.4 -7.9 4.7 -2.4 t4.7 3.9" transform="rotate(-22 292 328)"/><path d="M238.7 344.0 q2.4 -6.1 4.7 -1.8 t4.7 3.1 m6 0 q2.8 -9.0 5.6 -2.7 t5.6 4.5 m6 0 q2.7 -6.6 5.4 -2.0 t5.4 3.3 q1.9 -8.1 3.9 -2.4 t3.9 4.0 q1.6 -7.5 3.1 -2.2 t3.1 3.7 m6 0 q2.6 -6.3 5.2 -1.9 t5.2 3.2 q3.0 -7.0 5.9 -2.1 t5.9 3.5 q2.0 -5.3 3.9 -1.6 t3.9 2.7 q1.5 -5.8 3.1 -1.7 t3.1 2.9" transform="rotate(-22 288 338)"/><path d="M236.9 354.0 q1.7 -5.2 3.5 -1.6 t3.5 2.6 q2.0 -8.8 3.9 -2.7 t3.9 4.4 q2.1 -6.8 4.1 -2.1 t4.1 3.4 q2.5 -7.4 4.9 -2.2 t4.9 3.7 q2.4 -8.8 4.9 -2.6 t4.9 4.4 q2.1 -7.9 4.3 -2.4 t4.3 3.9 q2.0 -8.9 3.9 -2.7 t3.9 4.5 q2.3 -5.0 4.6 -1.5 t4.6 2.5 q2.4 -5.1 4.7 -1.5 t4.7 2.5 q2.4 -5.2 4.9 -1.6 t4.9 2.6 q2.2 -7.7 4.4 -2.3 t4.4 3.9 q2.6 -8.0 5.1 -2.4 t5.1 4.0 m6 0" transform="rotate(-22 300 348)"/><path d="M232.5 364.0 q2.5 -8.9 5.0 -2.7 t5.0 4.4 q2.2 -7.4 4.4 -2.2 t4.4 3.7 q2.0 -6.3 4.1 -1.9 t4.1 3.1 q2.4 -6.2 4.8 -1.9 t4.8 3.1 q2.7 -5.1 5.3 -1.5 t5.3 2.6 q2.6 -6.2 5.2 -1.9 t5.2 3.1 q2.7 -6.0 5.4 -1.8 t5.4 3.0 q2.2 -7.8 4.3 -2.3 t4.3 3.9 m6 0 q2.0 -6.3 4.0 -1.9 t4.0 3.2 q2.2 -8.4 4.3 -2.5 t4.3 4.2 q2.0 -7.6 4.0 -2.3 t4.0 3.8" transform="rotate(-22 290 358)"/><path d="M235.6 374.0 q1.8 -5.5 3.7 -1.6 t3.7 2.7 q1.8 -8.2 3.6 -2.5 t3.6 4.1 q1.8 -6.1 3.6 -1.8 t3.6 3.1 q2.5 -8.2 4.9 -2.5 t4.9 4.1 q1.7 -6.2 3.4 -1.9 t3.4 3.1 q1.9 -6.4 3.8 -1.9 t3.8 3.2 q2.1 -6.6 4.3 -2.0 t4.3 3.3 q1.7 -5.0 3.5 -1.5 t3.5 2.5 q2.8 -8.9 5.6 -2.7 t5.6 4.5 q2.9 -8.7 5.9 -2.6 t5.9 4.4 q2.6 -8.3 5.2 -2.5 t5.2 4.2 q2.3 -6.2 4.6 -1.8 t4.6 3.1" transform="rotate(-22 289 368)"/><path d="M233.8 384.0 q1.6 -7.4 3.2 -2.2 t3.2 3.7 q2.7 -5.2 5.4 -1.6 t5.4 2.6 q2.5 -8.7 5.1 -2.6 t5.1 4.3 q2.8 -7.3 5.7 -2.2 t5.7 3.7 m6 0 q2.6 -5.7 5.2 -1.7 t5.2 2.8 q2.5 -7.1 5.0 -2.1 t5.0 3.5 q2.9 -7.4 5.8 -2.2 t5.8 3.7 q1.9 -8.4 3.8 -2.5 t3.8 4.2 q2.7 -6.4 5.3 -1.9 t5.3 3.2 q2.3 -8.3 4.6 -2.5 t4.6 4.1" transform="rotate(-22 288 378)"/><path d="M238.3 394.0 q2.9 -8.2 5.8 -2.5 t5.8 4.1 q1.5 -7.5 3.0 -2.3 t3.0 3.8 q1.6 -6.1 3.1 -1.8 t3.1 3.0 q2.3 -6.7 4.6 -2.0 t4.6 3.3 q2.7 -5.0 5.3 -1.5 t5.3 2.5 m6 0 q1.7 -5.5 3.4 -1.6 t3.4 2.7 m6 0 q3.0 -8.4 5.9 -2.5 t5.9 4.2 m6 0 q2.3 -6.3 4.5 -1.9 t4.5 3.1 q2.0 -7.6 4.1 -2.3 t4.1 3.8 q2.0 -5.8 4.1 -1.7 t4.1 2.9" transform="rotate(-22 294 388)"/><path d="M233.0 404.0 q2.3 -7.9 4.7 -2.4 t4.7 3.9 q1.6 -5.7 3.2 -1.7 t3.2 2.9 q2.4 -8.1 4.8 -2.4 t4.8 4.1 q2.7 -7.5 5.4 -2.2 t5.4 3.7 q2.1 -7.0 4.1 -2.1 t4.1 3.5 q2.1 -7.8 4.3 -2.3 t4.3 3.9 q1.9 -7.1 3.7 -2.1 t3.7 3.6 q1.6 -6.7 3.2 -2.0 t3.2 3.3 q2.8 -8.7 5.6 -2.6 t5.6 4.4 q2.8 -8.2 5.7 -2.4 t5.7 4.1 q2.2 -5.5 4.4 -1.6 t4.4 2.7 q2.5 -8.5 5.0 -2.6 t5.0 4.3" transform="rotate(-22 291 398)"/><path d="M240 385h20M240 392h20M246 378v21M254 378v21" stroke-width="1.5"/><path d="M275 352v22M282 350v24M289 352v22M296 350v24M303 352v22M310 350v24M317 352v22" stroke-width="1.4"/><circle cx="286" cy="340" r="2.2" stroke-width="1.2"/><circle cx="294" cy="340" r="2.2" stroke-width="1.2"/><circle cx="302" cy="340" r="2.2" stroke-width="1.2"/><circle cx="310" cy="340" r="2.2" stroke-width="1.2"/><circle cx="318" cy="340" r="2.2" stroke-width="1.2"/><path d="M305 385l28-8M308 391l28-8M311 397l28-8" stroke-width="1.5"/></g>
<rect x="357" y="309.5" width="100" height="90" fill="#f6f1e6"/>
<clipPath id="c13"><rect x="357" y="309.5" width="103" height="90.0"/></clipPath>
<g clip-path="url(#c13)"><circle cx="414.2" cy="377.7" r="6.0" fill="#d8c9b0" opacity=".92"/><circle cx="357.8" cy="351.8" r="6.4" fill="#41b6c2" opacity=".92"/><circle cx="440.6" cy="318.6" r="5.2" fill="#ee8fa3" opacity=".92"/><circle cx="391.2" cy="317.6" r="4.6" fill="#ee8fa3" opacity=".92"/><circle cx="393.8" cy="325.1" r="6.2" fill="#9fd2d6" opacity=".92"/><circle cx="370.2" cy="382.9" r="4.3" fill="#f3b35a" opacity=".92"/><circle cx="367.0" cy="308.2" r="6.2" fill="#ee8fa3" opacity=".92"/><circle cx="428.5" cy="398.3" r="4.4" fill="#f2cf4a" opacity=".92"/><circle cx="382.5" cy="398.4" r="5.3" fill="#ee8fa3" opacity=".92"/><circle cx="372.3" cy="399.0" r="4.5" fill="#9fd2d6" opacity=".92"/><circle cx="383.4" cy="342.0" r="4.4" fill="#f2cf4a" opacity=".92"/><circle cx="380.1" cy="339.2" r="6.0" fill="#41b6c2" opacity=".92"/><circle cx="411.6" cy="374.5" r="4.2" fill="#7a7a7a" opacity=".92"/><circle cx="432.8" cy="353.2" r="4.8" fill="#f3b35a" opacity=".92"/><circle cx="399.9" cy="324.6" r="4.6" fill="#41b6c2" opacity=".92"/><circle cx="445.2" cy="341.6" r="5.0" fill="#d8c9b0" opacity=".92"/><circle cx="429.8" cy="342.4" r="5.4" fill="#41b6c2" opacity=".92"/><circle cx="398.0" cy="374.5" r="5.6" fill="#ee8fa3" opacity=".92"/><circle cx="366.3" cy="331.1" r="6.0" fill="#f3b35a" opacity=".92"/><circle cx="387.7" cy="341.4" r="5.3" fill="#f3b35a" opacity=".92"/><circle cx="365.3" cy="378.3" r="6.0" fill="#c9b79a" opacity=".92"/><circle cx="358.5" cy="396.9" r="4.2" fill="#7a7a7a" opacity=".92"/><circle cx="403.7" cy="342.1" r="4.4" fill="#c9b79a" opacity=".92"/><circle cx="442.8" cy="359.2" r="4.8" fill="#7a7a7a" opacity=".92"/><circle cx="384.1" cy="383.1" r="5.6" fill="#c9b79a" opacity=".92"/><circle cx="449.7" cy="323.2" r="4.1" fill="#d8c9b0" opacity=".92"/><circle cx="442.7" cy="311.0" r="5.9" fill="#7a7a7a" opacity=".92"/><circle cx="433.5" cy="350.8" r="5.1" fill="#41b6c2" opacity=".92"/><circle cx="448.0" cy="368.0" r="6.0" fill="#7a7a7a" opacity=".92"/><circle cx="434.7" cy="320.3" r="5.8" fill="#f2cf4a" opacity=".92"/><circle cx="414.9" cy="382.1" r="4.3" fill="#9fd2d6" opacity=".92"/><circle cx="390.4" cy="313.5" r="5.1" fill="#f2cf4a" opacity=".92"/><circle cx="398.0" cy="401.9" r="6.1" fill="#d8c9b0" opacity=".92"/><circle cx="398.1" cy="353.9" r="5.8" fill="#f3b35a" opacity=".92"/><circle cx="381.0" cy="352.2" r="6.3" fill="#e94b5a" opacity=".92"/><circle cx="390.8" cy="400.9" r="6.4" fill="#f3b35a" opacity=".92"/><circle cx="437.4" cy="324.9" r="5.2" fill="#d8c9b0" opacity=".92"/><circle cx="429.3" cy="389.5" r="4.9" fill="#7a7a7a" opacity=".92"/><circle cx="421.0" cy="370.4" r="5.9" fill="#7a7a7a" opacity=".92"/><circle cx="408.1" cy="370.8" r="6.1" fill="#c9b79a" opacity=".92"/><circle cx="428.1" cy="372.9" r="4.7" fill="#7a7a7a" opacity=".92"/><circle cx="416.7" cy="362.6" r="4.0" fill="#d8c9b0" opacity=".92"/><circle cx="428.5" cy="338.6" r="4.7" fill="#c9b79a" opacity=".92"/><circle cx="432.6" cy="368.9" r="6.0" fill="#7a7a7a" opacity=".92"/><circle cx="381.0" cy="340.5" r="6.3" fill="#9fd2d6" opacity=".92"/><circle cx="388.3" cy="387.2" r="6.2" fill="#f3b35a" opacity=".92"/><circle cx="447.7" cy="397.9" r="5.3" fill="#d8c9b0" opacity=".92"/><circle cx="448.1" cy="326.7" r="4.9" fill="#f3b35a" opacity=".92"/><circle cx="381.9" cy="315.4" r="5.7" fill="#9fd2d6" opacity=".92"/><circle cx="371.3" cy="381.4" r="5.5" fill="#9fd2d6" opacity=".92"/><circle cx="383.8" cy="360.0" r="6.2" fill="#c9b79a" opacity=".92"/><circle cx="423.4" cy="310.6" r="4.4" fill="#f3b35a" opacity=".92"/><circle cx="414.3" cy="325.0" r="5.9" fill="#f2cf4a" opacity=".92"/><circle cx="414.9" cy="311.9" r="5.2" fill="#ee8fa3" opacity=".92"/><circle cx="370.7" cy="391.8" r="4.3" fill="#f2cf4a" opacity=".92"/><circle cx="400.9" cy="359.5" r="5.0" fill="#7a7a7a" opacity=".92"/><circle cx="391.1" cy="365.5" r="5.5" fill="#ee8fa3" opacity=".92"/><circle cx="423.2" cy="343.2" r="4.9" fill="#c9b79a" opacity=".92"/><circle cx="436.3" cy="389.4" r="5.7" fill="#d8c9b0" opacity=".92"/><circle cx="390.5" cy="311.4" r="5.5" fill="#e94b5a" opacity=".92"/><circle cx="383.1" cy="356.2" r="6.4" fill="#c9b79a" opacity=".92"/><circle cx="446.0" cy="384.9" r="5.0" fill="#d8c9b0" opacity=".92"/><circle cx="390.1" cy="321.4" r="5.5" fill="#f3b35a" opacity=".92"/><circle cx="445.9" cy="399.0" r="5.5" fill="#7a7a7a" opacity=".92"/><circle cx="433.0" cy="370.2" r="5.0" fill="#7a7a7a" opacity=".92"/><circle cx="408.8" cy="365.8" r="4.4" fill="#9fd2d6" opacity=".92"/><circle cx="395.8" cy="399.8" r="5.2" fill="#f3b35a" opacity=".92"/><circle cx="447.4" cy="343.7" r="6.4" fill="#f2cf4a" opacity=".92"/><circle cx="411.6" cy="332.4" r="6.5" fill="#f3b35a" opacity=".92"/><circle cx="378.9" cy="309.8" r="6.4" fill="#c9b79a" opacity=".92"/><circle cx="401.7" cy="334.9" r="5.2" fill="#e94b5a" opacity=".92"/><circle cx="417.7" cy="398.3" r="4.6" fill="#41b6c2" opacity=".92"/><circle cx="429.3" cy="385.7" r="4.0" fill="#d8c9b0" opacity=".92"/><circle cx="408.2" cy="330.9" r="5.2" fill="#41b6c2" opacity=".92"/><circle cx="378.3" cy="333.2" r="4.4" fill="#c9b79a" opacity=".92"/></g>
<clipPath id="c21"><rect x="123.5" y="422" width="94.0" height="99"/></clipPath>
<g clip-path="url(#c21)">
<rect x="123" y="421" width="95" height="100" fill="#f3ead7"/>
<path d="M168.0 480.0L49.2 463.3L81.0 397.4L145.1 362.2z" fill="#e0283a"/>
<path d="M168.0 480.0L149.2 361.5L198.0 363.8L241.9 385.4z" fill="#f2a1b4"/>
<path d="M168.0 480.0L248.3 390.8L267.5 412.9L280.8 439.0z" fill="#3b3337"/>
<path d="M168.0 480.0L283.4 446.9L287.5 469.5L287.3 492.5z" fill="#9fa045"/>
<path d="M168.0 480.0L286.2 500.8L271.9 540.0L245.1 571.9z" fill="#57545a"/>
<path d="M168.0 480.0L238.5 577.1L214.9 590.5L188.8 598.2z" fill="#f09aae"/>
<path d="M168.0 480.0L180.5 599.3L147.2 598.2L115.4 587.9z" fill="#e9b24a"/>
<path d="M168.0 480.0L108.0 583.9L72.2 552.2L51.6 509.0z" fill="#e56a27"/>
<path d="M168.0 480.0L49.8 500.8L48.2 473.7L52.6 446.9z" fill="#3d3538"/>
<path d="M168 480L147.2 361.8" stroke="#1a1a1a" stroke-width="6.5"/>
<path d="M168 480L147.2 361.8" stroke="#f3ead7" stroke-width="4.2"/>
<path d="M168 480L245.1 388.1" stroke="#1a1a1a" stroke-width="6.5"/>
<path d="M168 480L245.1 388.1" stroke="#f3ead7" stroke-width="4.2"/>
<path d="M168 480L282.1 442.9" stroke="#1a1a1a" stroke-width="6.5"/>
<path d="M168 480L282.1 442.9" stroke="#f3ead7" stroke-width="4.2"/>
<path d="M168 480L286.8 496.7" stroke="#1a1a1a" stroke-width="6.5"/>
<path d="M168 480L286.8 496.7" stroke="#f3ead7" stroke-width="4.2"/>
<path d="M168 480L241.9 574.6" stroke="#1a1a1a" stroke-width="6.5"/>
<path d="M168 480L241.9 574.6" stroke="#f3ead7" stroke-width="4.2"/>
<path d="M168 480L184.7 598.8" stroke="#1a1a1a" stroke-width="6.5"/>
<path d="M168 480L184.7 598.8" stroke="#f3ead7" stroke-width="4.2"/>
<path d="M168 480L111.7 586.0" stroke="#1a1a1a" stroke-width="6.5"/>
<path d="M168 480L111.7 586.0" stroke="#f3ead7" stroke-width="4.2"/>
<path d="M168 480L50.6 504.9" stroke="#1a1a1a" stroke-width="6.5"/>
<path d="M168 480L50.6 504.9" stroke="#f3ead7" stroke-width="4.2"/>
<path d="M168 480L53.9 442.9" stroke="#1a1a1a" stroke-width="6.5"/>
<path d="M168 480L53.9 442.9" stroke="#f3ead7" stroke-width="4.2"/>
</g>
<clipPath id="c22"><rect x="238.5" y="422" width="96.5" height="99"/></clipPath>
<g clip-path="url(#c22)">
<rect x="238" y="421" width="98" height="100" fill="#f5b58f"/>
<rect x="238" y="421" width="98" height="20" fill="#f7e6d2"/>
<path d="M300 442c15-6 35-4 40 8v25c-10 5-30 2-42-8c-8-8-6-20 2-25z" fill="#3a9cb6" opacity=".85" filter="url(#b1)"/>
<path d="M318 470l20 2v40l-20-6z" fill="#f07aa0" opacity=".8"/>
<rect x="245" y="495" width="70" height="26" fill="#f7d36a" opacity=".45"/>
<text x="240" y="438" font-family="Liberation Sans" font-weight="bold" font-size="16" fill="#e0653a" letter-spacing="1">OBINGOE</text>
<g font-family="Liberation Serif" font-size="10" fill="#c4502a"><text x="239" y="457">4</text><text x="254" y="457">12</text><text x="269" y="457">16</text><text x="284" y="457">39</text><text x="299" y="457">56</text><text x="314" y="457">64</text><text x="239" y="474">0</text><text x="254" y="474">7</text><text x="269" y="474">22</text><text x="284" y="474">44</text><text x="299" y="474">53</text><text x="314" y="474">70</text><text x="239" y="491">6</text><text x="254" y="491">9</text><text x="269" y="491">29</text><text x="284" y="491">FR</text><text x="299" y="491">57</text><text x="314" y="491">66</text><text x="239" y="508">2</text><text x="254" y="508">5</text><text x="269" y="508">24</text><text x="284" y="508">34</text><text x="299" y="508">59</text><text x="314" y="508">72</text></g>
<path d="M252 442v80M267 442v80M282 442v80M297 442v80M312 442v80M327 442v80M238 461h98M238 478h98M238 495h98M238 512h98" stroke="#d4694a" stroke-width=".6" opacity=".7"/>
</g>
<rect x="358" y="422" width="100" height="99" fill="#a8d4d2"/>
<rect x="124" y="540" width="94" height="91" fill="#f4eee1"/>
<clipPath id="c31"><rect x="124" y="540" width="94" height="91"/></clipPath>
<g clip-path="url(#c31)" fill="#2a2526"><path d="M146 552L156 552L151 543z" transform="rotate(0 151 548)"/><path d="M127 573L137 573L132 564z" transform="rotate(80 132 569)"/><path d="M178 570L188 570L183 561z" transform="rotate(15 183 566)"/><path d="M201 560L211 560L206 551z" transform="rotate(-25 206 556)"/><path d="M155 595L165 595L160 586z" transform="rotate(5 160 591)"/><path d="M128 616L138 616L133 607z" transform="rotate(60 133 612)"/><path d="M183 610L193 610L188 601z" transform="rotate(25 188 606)"/><path d="M200 629L210 629L205 620z" transform="rotate(-35 205 625)"/><path d="M156 636L166 636L161 627z" transform="rotate(0 161 632)"/><path d="M122 636L132 636L127 627z" transform="rotate(0 127 632)"/></g>
<rect x="239" y="540" width="96.5" height="91" fill="#f5efe2"/>
<rect x="239" y="542" width="96.5" height="3" fill="#f29db0"/>
<rect x="239" y="549" width="96.5" height="3" fill="#9fd0cf"/>
<rect x="239" y="557" width="96.5" height="3.5" fill="#dc5420"/>
<rect x="239" y="569" width="96.5" height="3.5" fill="#3f4153"/>
<rect x="239" y="581" width="96.5" height="4" fill="#efcf3a"/>
<rect x="239" y="592" width="96.5" height="5" fill="#d9242d"/>
<rect x="239" y="610" width="96.5" height="1.5" fill="#d4c066"/>
<rect x="239" y="621" width="96.5" height="2" fill="#f4a0b6"/>
<rect x="239" y="626" width="96.5" height="1.5" fill="#f4a0b6"/>
<rect x="356" y="540" width="104" height="91" fill="#1d191a"/>
<clipPath id="c33"><rect x="356" y="540" width="104" height="91"/></clipPath>
<g clip-path="url(#c33)"><circle cx="378" cy="561" r="8" fill="#e6dfd3"/><circle cx="378" cy="609" r="8" fill="#e6dfd3"/><circle cx="404" cy="588" r="8.5" fill="#d72a2a"/><circle cx="432" cy="562" r="7.5" fill="#d96a2a"/><circle cx="418" cy="538" r="7" fill="#e9a33a"/><circle cx="432" cy="610" r="7.5" fill="#d62525"/><circle cx="354" cy="588" r="6" fill="#e9a33a"/></g>
<rect x="89" y="75" width="15" height="470" fill="#2a2626"/>
<rect x="89" y="208" width="15" height="120" fill="#dcd6cc"/>
<path d="M104 75V118H92C68 118 68 75 92 75z" fill="#2b2727"/>
<path d="M104 118V173H92C68 173 68 118 92 118z" fill="#2a2626"/>
<path d="M104 179V210H92C68 210 68 179 92 179z" fill="#2c2828"/>
<path d="M104 325V366H92C68 366 68 325 92 325z" fill="#c9c3b8"/>
<path d="M104 366V408H92C68 408 68 366 92 366z" fill="#2e2a2a"/>
<path d="M104 410V500H92C68 500 68 410 92 410z" fill="#282424"/>
<path d="M104 500V545H92C68 545 68 500 92 500z" fill="#252121"/>
<path d="M92 325C72 330 74 352 86 360" fill="none" stroke="#2a2626" stroke-width="6" opacity=".7"/>
<circle cx="98" cy="88" r="2.2" fill="#e02020"/>
<circle cx="94" cy="132" r="2.2" fill="#e02020"/>
<circle cx="95" cy="150" r="2.2" fill="#e02020"/>
<circle cx="94" cy="175" r="2.2" fill="#e02020"/>
<circle cx="99" cy="183" r="2.2" fill="#fff"/>
<circle cx="100" cy="192" r="2.2" fill="#e02020"/>
<circle cx="99" cy="200" r="2.2" fill="#fff"/>
<circle cx="100" cy="208" r="2.2" fill="#e02020"/>
<circle cx="99" cy="330" r="2.2" fill="#e02020"/>
<circle cx="94" cy="343" r="2.2" fill="#e02020"/>
<circle cx="96" cy="356" r="2.2" fill="#e02020"/>
<circle cx="103" cy="365" r="2.2" fill="#fff"/>
<circle cx="97" cy="372" r="2.2" fill="#e02020"/>
<circle cx="100" cy="405" r="2.2" fill="#e02020"/>
<circle cx="80" cy="347" r="2.2" fill="#fff"/>
<circle cx="84" cy="380" r="2.2" fill="#fff"/>
<circle cx="80" cy="422" r="2.2" fill="#fff"/>
<circle cx="103" cy="440" r="2.2" fill="#fff"/>
<circle cx="103" cy="466" r="2.2" fill="#fff"/>
<circle cx="103" cy="490" r="2.2" fill="#fff"/>
<pattern id="grid" width="2.2" height="2.2" patternUnits="userSpaceOnUse"><rect width="2.2" height="2.2" fill="#2a1f1c"/><rect width="1" height="1" fill="#5a4838"/></pattern>
<path d="M48 242L27 273L30 280L48 287" fill="none" stroke="#b3946a" stroke-width="7" stroke-linejoin="round"/>
<path d="M48 242L27 273L30 280L48 287" fill="none" stroke="#1d1616" stroke-width="2.2" stroke-dasharray="3 2" stroke-linejoin="round"/>
<path d="M142 241L157 262L156 272L142 291" fill="none" stroke="#b3946a" stroke-width="7" stroke-linejoin="round"/>
<path d="M142 241L157 262L156 272L142 291" fill="none" stroke="#1d1616" stroke-width="2.2" stroke-dasharray="3 2" stroke-linejoin="round"/>
<path d="M56 226h10v5h4v-6h21l2 6h50v65H47v-65h9z" fill="#b3946a"/>
<rect x="58" y="227" width="7" height="5" fill="#2a1f1c"/><rect x="72" y="227" width="18" height="5" fill="#2a1f1c"/>
<rect x="50" y="233.5" width="91.5" height="59" fill="url(#grid)"/>
<path d="M50 247h92M50 289h92" stroke="#d6c4a0" stroke-width="1.2"/>
<rect x="125" y="240" width="11" height="6" fill="none" stroke="#d6c4a0" stroke-width="1.2"/>
<circle cx="96.3" cy="267.3" r="21.5" fill="#2a1f1c" stroke="#d6c4a0" stroke-width="1.3"/>
<circle cx="96.3" cy="267.3" r="15" fill="#2a1f1c" stroke="#d6c4a0" stroke-width="1.3"/>
<path d="M97 279l-8-8c-3-4-1-10 4-10 2 0 3 1 4 3 1-2 3-3 5-3 5 0 6 6 3 10z" fill="#e23a3c"/>
<path d="M30 297l78-5 1 36-78 3z" fill="#f1ece0"/>
<path d="M113 292l78-6 3 37-78 6z" fill="#f1ece0"/>
<text x="36" y="322" font-family="Liberation Serif" font-size="25" fill="#2a2626" stroke="#2a2626" stroke-width=".6" transform="rotate(-3 70 310)" letter-spacing="-1.5">SNAP</text>
<text x="118" y="320" font-family="Liberation Serif" font-size="25" fill="#2a2626" stroke="#2a2626" stroke-width=".6" transform="rotate(-4 150 305)" letter-spacing="-1.5">SHOT</text>
</svg>
</div>
<div class="a" style="left:657px;top:0;width:1px;height:720px;background:#6a6a6a"></div>
<div class="a ttl" style="left:658px;top:0;width:369px;height:720px"></div>
<div class="a" style="left:665px;top:25px;width:362px;height:686px;background:#fff"></div>
<div class="a" style="left:676px;top:35px;width:351px;height:676px;background:#262626"></div>
<div class="a" style="left:678px;top:37px;width:349px;height:674px;background:#b0b0b0"></div>
<svg style="left:678px;top:37px" width="349" height="60"><defs><filter id="cn" x="0" y="0" width="100%" height="100%" color-interpolation-filters="sRGB"><feTurbulence type="fractalNoise" baseFrequency="0.5" numOctaves="3" seed="9"/><feColorMatrix type="matrix" values="0 0 0 0 0.25  0 0 0 0 0.25  0 0 0 0 0.25  0 0 0 -3 1.7"/></filter></defs><rect width="349" height="60" filter="url(#cn)" opacity=".35"/></svg>
<div class="a" style="left:777px;top:71px;width:250px;height:640px;background:#fff;border-left:2px solid #bdbdbd;border-top:2px solid #bdbdbd"></div>
<div class="a" style="left:708px;top:78px;width:319px;height:0;border-top:1.6px dashed #3a3a3a"></div>
<div class="a" style="left:773px;top:55px;width:0;height:40px;border-left:1.6px dashed #3a3a3a"></div>
<div class="a" style="left:1020px;top:89px;width:7px;height:195px;background:linear-gradient(90deg,#cfcfcf,#e6e6e6)"></div><div class="a" style="left:1020px;top:90px;width:7px;height:2px;background:#8a8a8a"></div>
<div class="a" style="left:1020px;top:284px;width:7px;height:8px;background:#9a9a9a"></div>
<div class="a" style="left:1020px;top:292px;width:7px;height:20px;background:#1a1a1a"></div>
<div class="a" style="left:1022px;top:312px;width:5px;height:72px;border-left:2px solid #888"></div>
<div class="a" style="left:1022px;top:395px;width:5px;height:100px;border-left:2px solid #888"></div>
<div class="a" style="left:1020px;top:613px;width:7px;height:27px;background:#8a8a8a"></div>
<div class="a" style="left:1020px;top:700px;width:7px;height:11px;background:#c9d8e8"></div>
<div class="a" style="left:658px;top:719px;width:369px;height:1px;background:#5a5a5a"></div>

<svg style="left:667px;top:5px" width="16" height="16" viewBox="0 0 16 16">
<defs><linearGradient id="psg667" x1="0" y1="0" x2="0" y2="1"><stop offset="0" stop-color="#3f78c8"/><stop offset="1" stop-color="#0d3a86"/></linearGradient></defs>
<path d="M0 2h11l3 3v11H0z" fill="url(#psg667)"/><path d="M11 2l3 3h-3z" fill="#e8eef8"/><rect x="0" y="2" width="9" height="2" fill="#5b8fd8"/>
<text x="2.2" y="13.5" font-family="Liberation Sans" font-size="8" fill="#fff" font-weight="bold">Ps</text></svg>
<div class="t" style="left:687.0px;top:9.34px;font-size:12px;color:#9a9a9a;letter-spacing:-0.205px;">tutorial1c.jpg @ 110% (RGB/8)</div>
<div class="a" style="left:435px;top:89px;width:585px;height:665px;background:#f0f0f0;border:1px solid #1f83d6;box-shadow:1px 2px 7px rgba(0,0,0,.45)"></div>
<div class="a" style="left:436px;top:90px;width:583px;height:30px;background:#fff"></div>
<svg style="left:998px;top:98px" width="12" height="12"><path d="M1 1L11 11M11 1L1 11" stroke="#111" stroke-width="1.1"/></svg>

<svg style="left:444px;top:96px" width="15" height="14"><defs><linearGradient id="dps" x1="0" y1="0" x2="0" y2="1"><stop offset="0" stop-color="#4b86d3"/><stop offset="1" stop-color="#123f8f"/></linearGradient></defs><rect width="15" height="14" fill="url(#dps)"/><rect x="14" y="1" width="1" height="13" fill="#0c2c66"/><text x="2" y="11" font-family="Liberation Sans" font-size="9.5" fill="#fff">Ps</text></svg>
<div class="t" style="left:465.0px;top:98.84px;font-size:12px;color:#000;letter-spacing:-0.672px;">Save As</div>
<div class="t" style="left:489.0px;top:132.69px;font-size:11px;color:#000;letter-spacing:-0.179px;">Save in:</div>
<div class="a" style="left:535px;top:127px;width:261px;height:22px;background:#fff;border:1px solid #7a7a7a"></div>
<svg style="left:543px;top:130px" width="14" height="16" viewBox="0 0 14 16"><defs><linearGradient id="fg" x1="0" y1="0" x2="1" y2="1"><stop offset="0" stop-color="#fde9a6"/><stop offset="1" stop-color="#f5d574"/></linearGradient></defs><rect x="0.5" y="0.5" width="11" height="15" fill="url(#fg)" stroke="#e9c45c"/><rect x="10.5" y="9.5" width="2" height="6" fill="#f7dc86" stroke="#e9c45c"/></svg>
<div class="t" style="left:561.0px;top:131.84px;font-size:12px;color:#000;letter-spacing:-0.772px;">1Tutorials</div>
<svg style="left:782px;top:136px" width="10" height="6"><path d="M0.5 0.5L5 5L9.5 0.5" fill="none" stroke="#404040" stroke-width="1.1"/></svg>
<svg style="left:811px;top:130px" width="17" height="17" viewBox="0 0 17 17"><defs><radialGradient id="bk" cx="0.5" cy="0.3" r="0.7"><stop offset="0" stop-color="#6db3ec"/><stop offset="0.55" stop-color="#1f6fbf"/><stop offset="1" stop-color="#0a3f7f"/></radialGradient></defs><circle cx="8.2" cy="8.2" r="7.6" fill="url(#bk)"/><path d="M4 8.2h8.5M4 8.2l3.5-3.3M4 8.2l3.5 3.3" stroke="#fff" stroke-width="1.8" fill="none"/></svg>
<svg style="left:834px;top:129px" width="16" height="18" viewBox="0 0 16 18"><path d="M1 7h4l1 1h6v9H1z" fill="#e9c660"/><path d="M1 17l2-7h12l-3 7z" fill="#f8df8c" stroke="#d9b24a" stroke-width=".6"/><path d="M7 15V8H4.5L9.5 1.5L14 8H11.5v5z" fill="#36a12e" stroke="#1f7a1a" stroke-width=".6"/></svg>
<svg style="left:857px;top:131px" width="17" height="15" viewBox="0 0 17 15"><path d="M1 5h4l1 1h6v8H1z" fill="#e9c660"/><path d="M1 14l2-6h11l-2 6z" fill="#f8df8c" stroke="#d9b24a" stroke-width=".6"/><circle cx="13" cy="4" r="3" fill="#f7a21b"/><circle cx="13" cy="4" r="1.5" fill="#fff3b0"/><path d="M13 0v8M9 4h8M10.2 1.2l5.6 5.6M15.8 1.2l-5.6 5.6" stroke="#ee3b1c" stroke-width=".7"/></svg>
<svg style="left:880px;top:131px" width="26" height="15" viewBox="0 0 26 15"><rect x=".5" y=".5" width="15" height="13.5" rx="1" fill="#f4f8fd" stroke="#2a6dd0"/><rect x="0" y="0" width="16" height="2.5" fill="#2a6dd0"/><rect x="3" y="5" width="2" height="2" fill="#8e8ec8"/><rect x="7" y="5" width="2" height="2" fill="#2f86d6"/><rect x="11" y="5" width="2" height="2" fill="#2da33a"/><rect x="3" y="9.5" width="2" height="2" fill="#e0643a"/><rect x="7" y="9.5" width="2" height="2" fill="#14288a"/><rect x="11" y="9.5" width="2" height="2" fill="#d9a030"/><path d="M18 5h7.5l-3.75 4z" fill="#111"/></svg>

<div class="a" style="left:442px;top:156px;width:87px;height:337px;background:#f4f4f4"></div>
<svg style="left:468px;top:166px" width="34" height="25" viewBox="0 0 34 25"><defs><linearGradient id="st" x1="0" y1="0" x2="0" y2="1"><stop offset="0" stop-color="#4fb0f7"/><stop offset="1" stop-color="#1a86e0"/></linearGradient></defs><path d="M23.2 0.8L26.2 8.6L32.6 10L27.6 16L24 23.8L18 19.8L9 23.8L11.5 16L8.2 10.2L15.8 8.6z" fill="url(#st)" stroke="#1f7fd0" stroke-width=".6"/><path d="M4 2h12M5 5h9M3 15h8M2 18h8" stroke="#7fc4f5" stroke-width="1.1"/></svg>
<svg style="left:471px;top:228px" width="28" height="20" viewBox="0 0 28 20"><defs><linearGradient id="dk" x1="0" y1="0" x2="1" y2="1"><stop offset="0" stop-color="#1c93f0"/><stop offset=".5" stop-color="#2ba4f7"/><stop offset=".5" stop-color="#1b96f2"/><stop offset="1" stop-color="#0f84e3"/></linearGradient></defs><rect x="0" y="0" width="28" height="20" fill="url(#dk)"/><rect x="0" y="17.5" width="28" height="2.5" fill="#0a64b8"/><rect x="1.5" y="18" width="1" height="1" fill="#fff"/><rect x="21" y="18" width="1" height="1" fill="#fff"/><rect x="23" y="18" width="1" height="1" fill="#fff"/><rect x="25" y="18" width="1" height="1" fill="#fff"/></svg>
<svg style="left:470px;top:286px" width="30" height="24" viewBox="0 0 30 24"><path d="M1 2.5h9l2 2h17v19H1z" fill="#f7d67b"/><rect x="1" y="6" width="28" height="17.5" fill="#fbe19a"/><rect x="2.5" y="3" width="5" height="1.5" fill="#fff"/><rect x="2" y="2.5" width="1" height="2" fill="#3aa0e0"/><path d="M6 24v-9.5a3 3 0 0 1 3-3h12a3 3 0 0 1 3 3V24h-5v-6h-8v6z" fill="#2aa6e6"/></svg>
<svg style="left:469px;top:343px" width="33" height="31" viewBox="0 0 33 31"><path d="M9 1l21 6v16l-21-4z" fill="#1d8fe8" stroke="#2f5e86" stroke-width="1"/><path d="M10 2.5l18.5 5.3v13.5L10 17.8z" fill="#43b4f6"/><path d="M10 2.5l18.5 5.3v6L10 12z" fill="#6fcbfa" opacity=".6"/><path d="M18 21l6 1.5v2l-6-1z" fill="#9aa4ad"/><path d="M0 26l10-3l15 4l-9 3z" fill="#e8eaec" stroke="#b4b9be" stroke-width=".6"/><path d="M3 26l7-2M6 27l8-2.3M9 28l8-2.3" stroke="#b0b5ba" stroke-width=".5"/></svg>
<svg style="left:470px;top:403px" width="32" height="36" viewBox="0 0 32 36"><defs><radialGradient id="gl" cx=".45" cy=".35" r=".7"><stop offset="0" stop-color="#b8dcef"/><stop offset=".6" stop-color="#5ea3cc"/><stop offset="1" stop-color="#24638f"/></radialGradient></defs><circle cx="21" cy="13" r="11" fill="url(#gl)"/><path d="M15 6c3-1 6 1 5 4s-4 2-5 5M24 4c2 2 3 6 1 8" stroke="#e3f2fa" stroke-width="1.6" fill="none" opacity=".8"/><path d="M1 10l18 4.5v14L1 25z" fill="#1c86dc" stroke="#3a5f80" stroke-width=".9"/><path d="M2.3 11.6l15.4 3.8v11.8L2.3 23.9z" fill="#4db8f6"/><path d="M8 27l6 1.5v2.5l-6-1z" fill="#9aa4ad"/><path d="M5 31l9-1.5l5 2l-9 1.8z" fill="#dfe3e6" stroke="#b6bbc0" stroke-width=".5"/></svg>

<div class="t" style="left:451.2px;top:197.84px;font-size:12px;color:#000;letter-spacing:-0.342px;">Quick access</div>
<div class="t" style="left:464.2px;top:256.84px;font-size:12px;color:#000;letter-spacing:-0.255px;">Desktop</div>
<div class="t" style="left:463.5px;top:317.24px;font-size:12px;color:#000;letter-spacing:-0.379px;">Libraries</div>
<div class="t" style="left:465.6px;top:376.54px;font-size:12px;color:#000;letter-spacing:-0.631px;">This PC</div>
<div class="t" style="left:463.5px;top:436.84px;font-size:12px;color:#000;letter-spacing:0.064px;">Network</div>
<div class="a" style="left:535px;top:156px;width:450px;height:267px;background:#fff"></div>
<div class="a" style="left:806px;top:156px;width:1px;height:267px;background:#e8eef5"></div>
<div class="a" style="left:926px;top:156px;width:1px;height:267px;background:#e8eef5"></div>
<svg style="left:666px;top:154px" width="10" height="6"><path d="M0.5 5L5 0.8L9.5 5" fill="none" stroke="#555" stroke-width="1"/></svg>

<div class="t" style="left:541.0px;top:161.84px;font-size:12px;color:#000;letter-spacing:-0.039px;">Name</div>
<div class="t" style="left:813.0px;top:161.84px;font-size:12px;color:#000;letter-spacing:0.046px;">Date modified</div>
<div class="t" style="left:933.0px;top:161.84px;font-size:12px;color:#000;letter-spacing:-0.339px;">Type</div>
<svg style="left:545px;top:181px" width="14" height="16" viewBox="0 0 14 16"><defs><linearGradient id="fg" x1="0" y1="0" x2="1" y2="1"><stop offset="0" stop-color="#fde9a6"/><stop offset="1" stop-color="#f5d574"/></linearGradient></defs><rect x="0.5" y="0.5" width="11" height="15" fill="url(#fg)" stroke="#e9c45c"/><rect x="10.5" y="9.5" width="2" height="6" fill="#f7dc86" stroke="#e9c45c"/></svg>
<svg style="left:545px;top:200px" width="14" height="16" viewBox="0 0 14 16"><defs><linearGradient id="fg" x1="0" y1="0" x2="1" y2="1"><stop offset="0" stop-color="#fde9a6"/><stop offset="1" stop-color="#f5d574"/></linearGradient></defs><rect x="0.5" y="0.5" width="11" height="15" fill="url(#fg)" stroke="#e9c45c"/><rect x="10.5" y="9.5" width="2" height="6" fill="#f7dc86" stroke="#e9c45c"/></svg>
<div class="t" style="left:561.0px;top:184.04px;font-size:12px;color:#000;letter-spacing:-0.536px;">2017-6_Mask1</div>
<div class="t" style="left:561.0px;top:203.04px;font-size:12px;color:#000;letter-spacing:-0.047px;">2018-2 Intro to Digital</div>
<div class="t" style="left:813.0px;top:184.04px;font-size:12px;color:#000;letter-spacing:-0.295px;">6/6/2017 12:13 PM</div>
<div class="t" style="left:813.0px;top:203.04px;font-size:12px;color:#000;letter-spacing:-0.311px;">2/16/2018 10:15 PM</div>
<div class="a" style="left:926px;top:176px;width:59px;height:40px;overflow:hidden">
<div class="t" style="left:7.0px;top:8.04px;font-size:12px;color:#000;letter-spacing:-0.169px;">File folder</div>
<div class="t" style="left:7.0px;top:27.04px;font-size:12px;color:#000;letter-spacing:-0.169px;">File folder</div>
</div>
<div class="a" style="left:535px;top:423px;width:450px;height:15px;background:#f0f0f0"></div>
<div class="a" style="left:552px;top:424px;width:316px;height:13px;background:#cdcdcd"></div>
<svg style="left:540px;top:426px" width="8" height="10"><path d="M6 1L2 5L6 9" fill="none" stroke="#606060" stroke-width="1.6"/></svg>
<svg style="left:973px;top:426px" width="8" height="10"><path d="M2 1L6 5L2 9" fill="none" stroke="#606060" stroke-width="1.6"/></svg>

<div class="t" style="left:537.3px;top:454.69px;font-size:11px;color:#000;letter-spacing:-0.451px;">File name:</div>
<div class="t" style="left:537.3px;top:480.69px;font-size:11px;color:#000;letter-spacing:-0.584px;">Format:</div>
<div class="a" style="left:631px;top:448px;width:246px;height:22px;background:#fff;border:1px solid #7a7a7a"></div>
<svg style="left:862px;top:457px" width="10" height="6"><path d="M0.5 0.5L5 5L9.5 0.5" fill="none" stroke="#404040" stroke-width="1.1"/></svg>
<div class="t" style="left:635.5px;top:454.69px;font-size:11px;color:#000;letter-spacing:-0.228px;">Tutorial-page.jpg</div>
<div class="a" style="left:631px;top:476px;width:246px;height:21px;background:#cce4f7;border:1px solid #0078d7"></div>
<svg style="left:862px;top:484px" width="10" height="6"><path d="M0.5 0.5L5 5L9.5 0.5" fill="none" stroke="#404040" stroke-width="1.1"/></svg>
<div class="t" style="left:634.0px;top:480.69px;font-size:11px;color:#000;letter-spacing:-0.281px;">JPEG (*.JPG;*.JPEG;*.JPE)</div>
<div class="a" style="left:911px;top:449px;width:73px;height:21px;background:#e1e1e1;border:2px solid #0078d7"></div>
<div class="a" style="left:911px;top:475px;width:73px;height:21px;background:#e1e1e1;border:1px solid #adadad"></div>
<div class="t" style="left:935.5px;top:454.69px;font-size:11px;color:#000;letter-spacing:-0.359px;">Save</div>
<div class="t" style="left:930.4px;top:480.69px;font-size:11px;color:#000;letter-spacing:-0.210px;">Cancel</div>
<div class="a" style="left:536px;top:512px;width:447px;height:200px;border:1px solid #dcdcdc"></div>
<div class="a" style="left:543px;top:506px;width:78px;height:12px;background:#f0f0f0"></div>
<div class="a" style="left:545px;top:583px;width:412px;height:1px;background:#a0a0a0"></div>
<div class="a" style="left:545px;top:635px;width:412px;height:1px;background:#a0a0a0"></div>
<div class="a" style="left:545px;top:648px;width:13px;height:13px;border:1px solid #cccccc;background:#f0f0f0"></div>
<svg style="left:546px;top:649px" width="11" height="11"><path d="M2 5.5L4.3 8L9 2.5" fill="none" stroke="#b5b5b5" stroke-width="1.3"/></svg>
<div class="a" style="left:545px;top:674px;width:412px;height:29px;background:#fff;border-left:1px solid #a0a0a0;border-top:1px solid #a0a0a0"></div>
<svg style="left:550px;top:679px" width="18" height="17" viewBox="0 0 18 17"><path d="M9 1L17 16H1z" fill="#f7ef1a" stroke="#111" stroke-width="1.3" stroke-linejoin="round"/><rect x="8" y="6" width="2" height="5.5" fill="#111"/><rect x="8" y="12.5" width="2" height="2" fill="#111"/></svg>

<div class="t" style="left:545.0px;top:506.84px;font-size:12px;color:#000;letter-spacing:-0.004px;">Save Options</div>
<div class="t" style="left:545.0px;top:522.84px;font-size:12px;color:#000;letter-spacing:-0.272px;">Save:</div>
<div class="t" style="left:545.0px;top:591.84px;font-size:12px;color:#000;letter-spacing:-0.283px;">Color:</div>
<div class="t" style="left:562.0px;top:649.84px;font-size:12px;color:#6d6d6d;letter-spacing:-0.129px;">Thumbnail</div>
<div class="t" style="left:576.0px;top:680.84px;font-size:12px;color:#000;letter-spacing:-0.416px;">File must be Flattened</div>
<div class="a" style="left:443px;top:728px;width:108px;height:18px;background:#e1e1e1;border:1px solid #adadad"></div>
<div class="t" style="left:454.6px;top:731.69px;font-size:11px;color:#000;letter-spacing:-0.224px;">Use Adobe Dialog</div>
<svg style="left:1009px;top:742px" width="9" height="9"><g fill="#b5b5b5"><rect x="6" y="0" width="2" height="2"/><rect x="3" y="3" width="2" height="2"/><rect x="6" y="3" width="2" height="2"/><rect x="0" y="6" width="2" height="2"/><rect x="3" y="6" width="2" height="2"/><rect x="6" y="6" width="2" height="2"/></g></svg>
<div class="a" style="left:631px;top:497px;width:289px;height:249px;background:#fff;border:1px solid #0078d7;box-shadow:2px 2px 3px rgba(0,0,0,.3)"></div>
<div class="a" style="left:632px;top:589px;width:287px;height:13px;background:#0078d7"></div>
<div class="t" style="left:634.0px;top:499.99px;font-size:11px;color:#000;letter-spacing:-0.25px">Photoshop (*.PSD;*.PDD)</div>
<div class="t" style="left:634.0px;top:512.99px;font-size:11px;color:#000;letter-spacing:-0.25px">BMP (*.BMP;*.RLE;*.DIB)</div>
<div class="t" style="left:634.0px;top:525.99px;font-size:11px;color:#000;letter-spacing:-0.25px">CompuServe GIF (*.GIF)</div>
<div class="t" style="left:634.0px;top:538.99px;font-size:11px;color:#000;letter-spacing:-0.25px">Dicom (*.DCM;*.DC3;*.DIC)</div>
<div class="t" style="left:634.0px;top:551.99px;font-size:11px;color:#000;letter-spacing:-0.25px">Photoshop EPS (*.EPS)</div>
<div class="t" style="left:634.0px;top:564.99px;font-size:11px;color:#000;letter-spacing:-0.25px">Photoshop DCS 1.0 (*.EPS)</div>
<div class="t" style="left:634.0px;top:577.99px;font-size:11px;color:#000;letter-spacing:-0.25px">Photoshop DCS 2.0 (*.EPS)</div>
<div class="t" style="left:634.0px;top:590.99px;font-size:11px;color:#fff;letter-spacing:-0.25px">JPEG (*.JPG;*.JPEG;*.JPE)</div>
<div class="t" style="left:634.0px;top:603.99px;font-size:11px;color:#000;letter-spacing:-0.25px">Large Document Format (*.PSB)</div>
<div class="t" style="left:634.0px;top:616.99px;font-size:11px;color:#000;letter-spacing:-0.25px">PCX (*.PCX)</div>
<div class="t" style="left:634.0px;top:629.99px;font-size:11px;color:#000;letter-spacing:-0.25px">Photoshop PDF (*.PDF;*.PDP)</div>
<div class="t" style="left:634.0px;top:642.99px;font-size:11px;color:#000;letter-spacing:-0.25px">Photoshop Raw (*.RAW)</div>
<div class="t" style="left:634.0px;top:655.99px;font-size:11px;color:#000;letter-spacing:-0.25px">PICT File (*.PCT;*.PICT)</div>
<div class="t" style="left:634.0px;top:668.99px;font-size:11px;color:#000;letter-spacing:-0.25px">Pixar (*.PXR)</div>
<div class="t" style="left:634.0px;top:681.99px;font-size:11px;color:#000;letter-spacing:-0.25px">PNG (*.PNG)</div>
<div class="t" style="left:634.0px;top:694.99px;font-size:11px;color:#000;letter-spacing:-0.25px">Portable Bit Map (*.PBM;*.PGM;*.PPM;*.PNM;*.PFM;*.PAM)</div>
<div class="t" style="left:634.0px;top:707.99px;font-size:11px;color:#000;letter-spacing:-0.25px">Scitex CT (*.SCT)</div>
<div class="t" style="left:634.0px;top:720.99px;font-size:11px;color:#000;letter-spacing:-0.25px">Targa (*.TGA;*.VDA;*.ICB;*.VST)</div>
<div class="t" style="left:634.0px;top:733.99px;font-size:11px;color:#000;letter-spacing:-0.25px">TIFF (*.TIF;*.TIFF)</div>
</body></html>
